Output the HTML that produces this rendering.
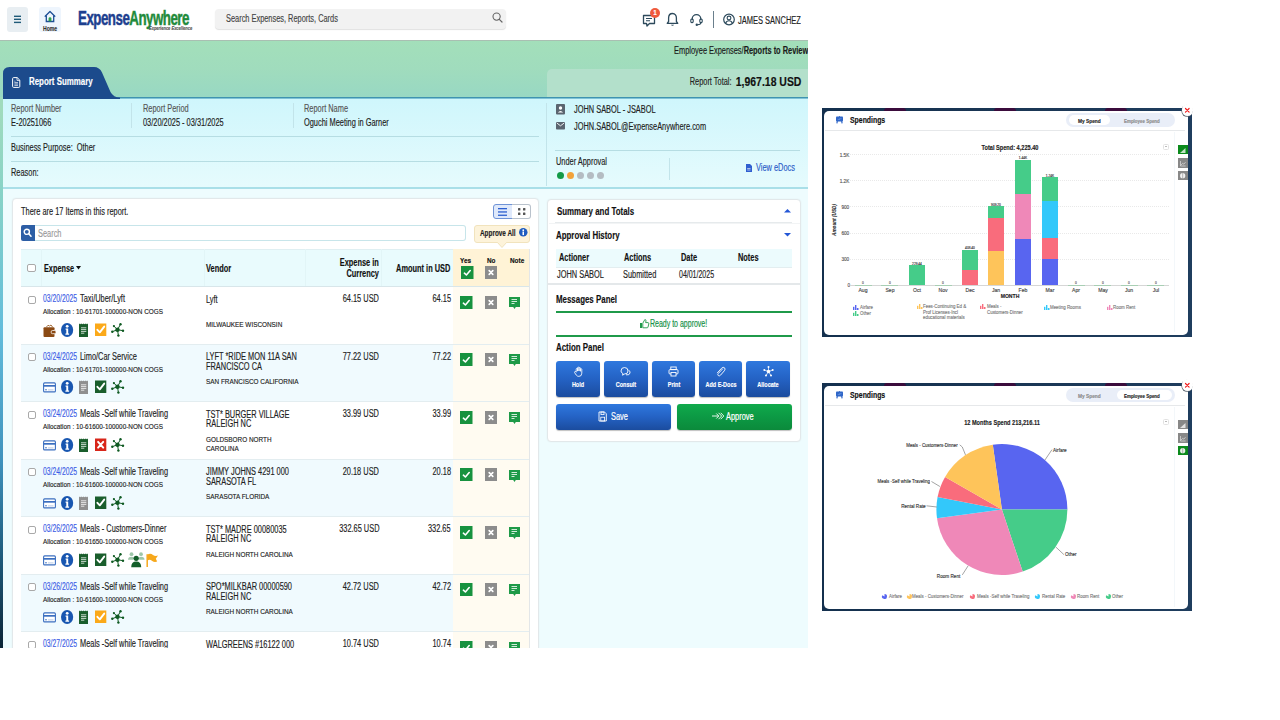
<!DOCTYPE html>
<html><head><meta charset="utf-8"><title>ExpenseAnywhere</title>
<style>
html,body{margin:0;padding:0;}
body{width:1280px;height:720px;overflow:hidden;background:#fff;position:relative;font-family:"Liberation Sans",sans-serif;}
.a{position:absolute;}
.t{position:absolute;white-space:nowrap;-webkit-text-stroke-width:.15px;}
svg{overflow:visible;}
#app{position:absolute;left:0;top:0;width:808px;height:648px;overflow:hidden;
 background:linear-gradient(180deg,#a3dcbc 0px,#a0dbbd 110px,#86d2c8 200px,#62bddb 330px,#3f93bd 460px,#1d5a7a 560px,#0b2536 648px);}
</style></head><body>
<div id="app">
<div class="a" style="left:0px;top:0px;width:808px;height:40px;background:#fff;"></div>
<div class="a" style="left:0px;top:40px;width:808px;height:1px;background:#a9bfb2;"></div>
<div class="a" style="left:0px;top:41px;width:808px;height:56px;background:linear-gradient(180deg,#a3dfba 0%,#a0dcbd 50%,#98d8c3 100%);"></div>
<div class="a" style="left:7px;top:7px;width:21px;height:25px;background:#e8eef2;border-radius:3px;"></div>
<svg class="a" style="left:14px;top:15px;" width="7" height="8" viewBox="0 0 7 8"><rect x="0" y="0.6" width="7" height="1.4" fill="#1f5a78"/><rect x="0" y="3.6" width="7" height="1.4" fill="#1f5a78"/><rect x="0" y="6.7" width="7" height="1.4" fill="#1f5a78"/></svg>
<div class="a" style="left:39px;top:7px;width:22px;height:25px;background:#eef5fd;border-radius:3px;"></div>
<svg class="a" style="left:44px;top:10px;" width="12" height="13" viewBox="0 0 12 13"><path d="M1.2 6.2 L6 1.5 L10.8 6.2" fill="none" stroke="#1d4f96" stroke-width="1.3" stroke-linejoin="round" stroke-linecap="round"/><path d="M2.3 5.6 V11.5 H9.7 V5.6" fill="none" stroke="#1d4f96" stroke-width="1.3"/><path d="M4.6 11.3 V8.6 a1.4 1.4 0 0 1 2.8 0 V11.3 Z" fill="#2ea04e"/></svg>
<div class="t" style="left:42.8px;top:25.75px;font-size:6.5px;line-height:6.5px;color:#333;font-weight:bold;transform:scaleX(0.78);transform-origin:0 0;">Home</div>
<div class="t" style="left:78px;top:6px;font-size:21px;line-height:24px;font-weight:bold;letter-spacing:-0.8px;transform:scaleX(.635);-webkit-text-stroke:.5px;transform-origin:0 0;"><span style="color:#1d3f8f">Expense</span><span style="color:#1f8b3b">Anywhere</span></div>
<div class="t" style="left:148.5px;top:26.25px;font-size:5px;line-height:5px;color:#555;font-weight:bold;transform:scaleX(0.8);transform-origin:0 0;"><i>Experience Excellence</i></div>
<div class="a" style="left:215px;top:9px;width:291px;height:20px;background:#f2f2f2;border-radius:4px;box-shadow:0 1px 1px rgba(0,0,0,.12);"></div>
<div class="t" style="left:226px;top:14.49px;font-size:10px;line-height:10px;color:#444;transform:scaleX(0.74);transform-origin:0 0;">Search Expenses, Reports, Cards</div>
<svg class="a" style="left:492px;top:12px;" width="11" height="11" viewBox="0 0 11 11"><circle cx="4.6" cy="4.6" r="3.6" fill="none" stroke="#666" stroke-width="1.1"/><path d="M7.3 7.3 L10 10" stroke="#666" stroke-width="1.2" stroke-linecap="round"/></svg>
<svg class="a" style="left:642px;top:14px;" width="14" height="13" viewBox="0 0 14 13"><path d="M1.5 1.5 H12.5 V9.5 H7.5 L5 12 L4.5 9.5 H1.5 Z" fill="none" stroke="#2d4a5c" stroke-width="1.3" stroke-linejoin="round"/><path d="M4 4.5 H10 M4 6.8 H8" stroke="#2d4a5c" stroke-width="1.1"/></svg>
<div class="a" style="left:649.5px;top:7.5px;width:10px;height:10px;border-radius:50%;background:#ef5a3c;"></div>
<div class="t" style="left:454.50px;width:400px;text-align:center;top:9.19px;font-size:7px;line-height:7px;color:#fff;font-weight:bold;transform:scaleX(0.9);transform-origin:50% 0;">1</div>
<svg class="a" style="left:666px;top:12px;" width="13" height="15" viewBox="0 0 13 15"><path d="M6.5 1.5 C3.8 1.5 2.6 3.6 2.6 6 V9.5 L1.2 11.3 H11.8 L10.4 9.5 V6 C10.4 3.6 9.2 1.5 6.5 1.5 Z" fill="none" stroke="#2d4a5c" stroke-width="1.3" stroke-linejoin="round"/><path d="M5 12.8 a1.6 1.6 0 0 0 3 0" fill="#2d4a5c"/></svg>
<svg class="a" style="left:690px;top:13px;" width="13" height="13" viewBox="0 0 13 13"><path d="M2.2 7 V6 a4.3 4.3 0 0 1 8.6 0 V7" fill="none" stroke="#2d4a5c" stroke-width="1.3"/><rect x="0.8" y="6" width="2.4" height="3.6" rx="1" fill="none" stroke="#2d4a5c" stroke-width="1.1"/><rect x="9.8" y="6" width="2.4" height="3.6" rx="1" fill="none" stroke="#2d4a5c" stroke-width="1.1"/><path d="M11 9.5 Q11 11.5 7.5 11.8" fill="none" stroke="#2d4a5c" stroke-width="1.1"/><circle cx="6.8" cy="11.8" r="1.2" fill="#2d4a5c"/></svg>
<div class="a" style="left:713px;top:11px;width:1px;height:17px;background:#6a7f8c;"></div>
<svg class="a" style="left:723px;top:13px;" width="12" height="13" viewBox="0 0 12 13"><circle cx="6" cy="6.5" r="5.3" fill="none" stroke="#2d4a5c" stroke-width="1.2"/><circle cx="6" cy="5" r="1.9" fill="none" stroke="#2d4a5c" stroke-width="1.1"/><path d="M2.6 10.3 Q3.5 7.8 6 7.8 Q8.5 7.8 9.4 10.3" fill="none" stroke="#2d4a5c" stroke-width="1.1"/></svg>
<div class="t" style="left:738px;top:15.50px;font-size:10px;line-height:10px;color:#222;transform:scaleX(0.75);transform-origin:0 0;">JAMES SANCHEZ</div>
<div class="t" style="right:0.00px;top:46.09px;font-size:10px;line-height:10px;color:#1a1a1a;transform:scaleX(0.74);transform-origin:100% 0;">Employee Expenses/<b>Reports to Review</b></div>
<div class="a" style="left:3px;top:97px;width:805px;height:1px;background:#3f93b0;"></div>
<div class="a" style="left:3px;top:98px;width:805px;height:1px;background:#7ec3d6;"></div>
<svg class="a" style="left:3px;top:67px;" width="118" height="32" viewBox="0 0 118 32"><path d="M0 32 V6.5 Q0 0 6.5 0 H91 Q96.5 0 99 5.5 L107.5 25 Q110.5 30.5 117 30.5 V32 Z" fill="#1c4b8c"/></svg>
<svg class="a" style="left:12px;top:77px;" width="8.5" height="11" viewBox="0 0 8.5 11"><path d="M1.6 .6 H5.2 L7.8 3.2 V9.4 Q7.8 10.4 6.8 10.4 H1.6 Q.6 10.4 .6 9.4 V1.6 Q.6 .6 1.6 .6 Z" fill="none" stroke="#fff" stroke-width="1"/><path d="M5 .8 V3.4 H7.6" fill="none" stroke="#fff" stroke-width=".8"/><path d="M2.4 5.6 H6 M2.4 7 H6 M2.4 8.4 H6" stroke="#fff" stroke-width=".7"/><path d="M2.4 4.2 H3.4" stroke="#fff" stroke-width=".7"/></svg>
<div class="t" style="left:29.4px;top:77.09px;font-size:10px;line-height:10px;color:#fff;font-weight:bold;transform:scaleX(0.79);transform-origin:0 0;">Report Summary</div>
<div class="a" style="left:547px;top:69px;width:261px;height:28px;background:#b3e0cb;border-top-left-radius:5px;"></div>
<div class="t" style="right:76.50px;top:76.89px;font-size:10px;line-height:10px;color:#222;transform:scaleX(0.74);transform-origin:100% 0;">Report Total:</div>
<div class="t" style="right:7.00px;top:76.03px;font-size:12px;line-height:12px;color:#111;font-weight:bold;transform:scaleX(0.87);transform-origin:100% 0;">1,967.18 USD</div>
<div class="a" style="left:3px;top:99px;width:805px;height:89px;background:linear-gradient(180deg,#cff6fc 0%,#e6fbfd 100%);"></div>
<div class="a" style="left:3px;top:187px;width:805px;height:2px;background:#a9dfe8;"></div>
<div class="t" style="left:11px;top:103.79px;font-size:10px;line-height:10px;color:#555;transform:scaleX(0.74);transform-origin:0 0;">Report Number</div>
<div class="t" style="left:11px;top:117.50px;font-size:10px;line-height:10px;color:#222;transform:scaleX(0.74);transform-origin:0 0;">E-20251066</div>
<div class="a" style="left:131px;top:103px;width:1px;height:25px;background:#c2e4ea;"></div>
<div class="t" style="left:142.7px;top:103.79px;font-size:10px;line-height:10px;color:#555;transform:scaleX(0.74);transform-origin:0 0;">Report Period</div>
<div class="t" style="left:142.7px;top:117.50px;font-size:10px;line-height:10px;color:#222;transform:scaleX(0.74);transform-origin:0 0;">03/20/2025 - 03/31/2025</div>
<div class="a" style="left:293px;top:103px;width:1px;height:25px;background:#c2e4ea;"></div>
<div class="t" style="left:304.4px;top:103.79px;font-size:10px;line-height:10px;color:#555;transform:scaleX(0.74);transform-origin:0 0;">Report Name</div>
<div class="t" style="left:304.4px;top:117.50px;font-size:10px;line-height:10px;color:#222;transform:scaleX(0.74);transform-origin:0 0;">Oguchi Meeting in Garner</div>
<div class="a" style="left:11px;top:136px;width:528px;height:1px;background:#b6dde3;"></div>
<div class="t" style="left:11px;top:143.09px;font-size:10px;line-height:10px;color:#222;transform:scaleX(0.74);transform-origin:0 0;">Business Purpose:&nbsp; Other</div>
<div class="a" style="left:11px;top:161px;width:528px;height:1px;background:#b6dde3;"></div>
<div class="t" style="left:11px;top:168.09px;font-size:10px;line-height:10px;color:#222;transform:scaleX(0.74);transform-origin:0 0;">Reason:</div>
<div class="a" style="left:546px;top:103px;width:1px;height:83px;background:#c2e4ea;"></div>
<svg class="a" style="left:556px;top:104px;" width="9" height="11" viewBox="0 0 9 11"><rect x="0" y="0" width="9" height="10.5" rx="1" fill="#5a6570"/><circle cx="4.5" cy="4" r="1.7" fill="#fff"/><path d="M1.8 8.6 Q4.5 5.6 7.2 8.6 Z" fill="#fff"/></svg>
<div class="t" style="left:574.4px;top:105.09px;font-size:10px;line-height:10px;color:#222;transform:scaleX(0.74);transform-origin:0 0;">JOHN SABOL - JSABOL</div>
<svg class="a" style="left:556px;top:122px;" width="9" height="8" viewBox="0 0 9 8"><rect x="0" y="0" width="9" height="7.5" rx=".8" fill="#5a6570"/><path d="M.8 1 L4.5 3.8 L8.2 1" fill="none" stroke="#fff" stroke-width=".9"/></svg>
<div class="t" style="left:574.4px;top:121.69px;font-size:10px;line-height:10px;color:#222;transform:scaleX(0.74);transform-origin:0 0;">JOHN.SABOL@ExpenseAnywhere.com</div>
<div class="a" style="left:555px;top:150px;width:245px;height:1px;background:#b6dde3;"></div>
<div class="t" style="left:555.5px;top:157.09px;font-size:10px;line-height:10px;color:#222;transform:scaleX(0.74);transform-origin:0 0;">Under Approval</div>
<div class="a" style="left:556.60px;top:172.1px;width:7.4px;height:7.4px;border-radius:50%;background:#139a47;"></div>
<div class="a" style="left:566.67px;top:172.1px;width:7.4px;height:7.4px;border-radius:50%;background:#f2a33a;"></div>
<div class="a" style="left:576.74px;top:172.1px;width:7.4px;height:7.4px;border-radius:50%;background:#b4bcc2;"></div>
<div class="a" style="left:586.81px;top:172.1px;width:7.4px;height:7.4px;border-radius:50%;background:#b4bcc2;"></div>
<div class="a" style="left:596.88px;top:172.1px;width:7.4px;height:7.4px;border-radius:50%;background:#b4bcc2;"></div>
<div class="a" style="left:669px;top:158px;width:1px;height:22px;background:#c2e4ea;"></div>
<svg class="a" style="left:746px;top:164px;" width="6" height="8" viewBox="0 0 6 8"><path d="M0 0 H4 L6 2 V8 H0 Z" fill="#2f5fd0"/><path d="M1.2 4.5 H4.5 M1.2 6 H4.5" stroke="#fff" stroke-width=".6"/></svg>
<div class="t" style="left:756.2px;top:163.49px;font-size:10px;line-height:10px;color:#2a5bc8;transform:scaleX(0.74);transform-origin:0 0;">View eDocs</div>
<div class="a" style="left:3px;top:189px;width:805px;height:459px;background:#eefcfe;"></div>
<div class="a" style="left:11.5px;top:198px;width:527.5px;height:470px;background:#fff;border:1px solid #e2e8ea;border-radius:4px;box-sizing:border-box;box-shadow:0 0 2px rgba(0,0,0,.06);"></div>
<div class="t" style="left:20.8px;top:206.89px;font-size:10px;line-height:10px;color:#222;transform:scaleX(0.74);transform-origin:0 0;">There are 17 Items in this report.</div>
<div class="a" style="left:493px;top:204px;width:19.5px;height:15px;background:#dfe9fb;border:1px solid #6f93d6;border-radius:3px 0 0 3px;box-sizing:border-box;"></div>
<svg class="a" style="left:498px;top:207.5px;" width="9" height="8" viewBox="0 0 9 8"><rect x="0" y="0" width="9" height="1.3" fill="#2b5fd0"/><rect x="0" y="3.3" width="9" height="1.3" fill="#2b5fd0"/><rect x="0" y="6.6" width="9" height="1.3" fill="#2b5fd0"/></svg>
<div class="a" style="left:512px;top:204px;width:18.5px;height:15px;background:#fff;border:1px solid #b9c2cc;border-left:none;border-radius:0 3px 3px 0;box-sizing:border-box;"></div>
<svg class="a" style="left:517.5px;top:208px;" width="8" height="7" viewBox="0 0 8 7"><rect x="0" y="0" width="2.4" height="2.4" rx=".5" fill="#555"/><rect x="5" y="0" width="2.4" height="2.4" rx=".5" fill="#555"/><rect x="0" y="4.6" width="2.4" height="2.4" rx=".5" fill="#555"/><rect x="5" y="4.6" width="2.4" height="2.4" rx=".5" fill="#555"/></svg>
<div class="a" style="left:20.5px;top:225px;width:14px;height:16px;background:#2d5ea5;border-radius:2px 0 0 2px;"></div>
<svg class="a" style="left:23px;top:228px;" width="9" height="10" viewBox="0 0 9 10"><circle cx="3.8" cy="3.8" r="2.6" fill="none" stroke="#fff" stroke-width="1.4"/><path d="M5.8 5.8 L8 8.2" stroke="#fff" stroke-width="1.6" stroke-linecap="round"/></svg>
<div class="a" style="left:34.5px;top:225px;width:431.5px;height:16px;background:#fff;border:1px solid #c7e5ea;border-left:none;border-radius:0 3px 3px 0;box-sizing:border-box;"></div>
<div class="t" style="left:37.8px;top:228.59px;font-size:10px;line-height:10px;color:#999;transform:scaleX(0.74);transform-origin:0 0;">Search</div>
<div class="a" style="left:474px;top:224.5px;width:55.5px;height:18.5px;background:#fdf3da;border:1px solid #f1e3bd;border-radius:3px;box-sizing:border-box;"></div>
<svg class="a" style="left:497px;top:242px;" width="10" height="6" viewBox="0 0 10 6"><path d="M0 0 L5 5.5 L10 0 Z" fill="#fdf3da"/><path d="M0 0 L5 5.5 L10 0" fill="none" stroke="#f1e3bd" stroke-width="1"/><rect x="0.6" y="-1" width="8.8" height="1.4" fill="#fdf3da"/></svg>
<div class="t" style="left:480px;top:229.43px;font-size:9px;line-height:9px;color:#1a1a1a;font-weight:bold;transform:scaleX(0.71);transform-origin:0 0;">Approve All</div>
<svg class="a" style="left:518.5px;top:228px;" width="8.5" height="8.5" viewBox="0 0 8.5 8.5"><circle cx="4.25" cy="4.25" r="4.25" fill="#1f5cc0"/><circle cx="4.25" cy="2.2" r=".9" fill="#fff"/><rect x="3.5" y="3.5" width="1.5" height="3.6" fill="#fff"/></svg>
<div class="a" style="left:20.5px;top:248.5px;width:509.0px;height:38px;background:#e9fbfd;border-top:1px solid #dfeff2;box-sizing:border-box;"></div>
<div class="a" style="left:453px;top:248.5px;width:76.5px;height:38px;background:#fff3d6;"></div>
<div class="a" style="left:20.5px;top:286px;width:509.0px;height:1.5px;background:#d8e6ea;"></div>
<div class="a" style="left:40.5px;top:249px;width:1px;height:37px;background:#e2f5f7;"></div>
<div class="a" style="left:203.5px;top:249px;width:1px;height:37px;background:#e2f5f7;"></div>
<div class="a" style="left:305px;top:249px;width:1px;height:37px;background:#e2f5f7;"></div>
<div class="a" style="left:381.2px;top:249px;width:1px;height:37px;background:#e2f5f7;"></div>
<div class="a" style="left:27.3px;top:263.7px;width:8.5px;height:8.5px;background:#fff;border:1px solid #a9a9a9;border-radius:2px;box-sizing:border-box;"></div>
<div class="t" style="left:43.8px;top:263.69px;font-size:10px;line-height:10px;color:#111;font-weight:bold;transform:scaleX(0.73);transform-origin:0 0;">Expense</div>
<svg class="a" style="left:76.3px;top:266.4px;" width="5" height="4" viewBox="0 0 5 4"><path d="M0 0 H5 L2.5 3.6 Z" fill="#111"/></svg>
<div class="t" style="left:206.3px;top:263.69px;font-size:10px;line-height:10px;color:#111;font-weight:bold;transform:scaleX(0.74);transform-origin:0 0;">Vendor</div>
<div class="t" style="right:429.00px;top:258.30px;font-size:10px;line-height:10px;color:#111;font-weight:bold;transform:scaleX(0.74);transform-origin:100% 0;">Expense in</div>
<div class="t" style="right:429.00px;top:269.30px;font-size:10px;line-height:10px;color:#111;font-weight:bold;transform:scaleX(0.74);transform-origin:100% 0;">Currency</div>
<div class="t" style="right:358.00px;top:263.69px;font-size:10px;line-height:10px;color:#111;font-weight:bold;transform:scaleX(0.74);transform-origin:100% 0;">Amount in USD</div>
<div class="t" style="left:460.4px;top:257.36px;font-size:8px;line-height:8px;color:#111;font-weight:bold;transform:scaleX(0.8);transform-origin:0 0;">Yes</div>
<div class="t" style="left:486.8px;top:257.36px;font-size:8px;line-height:8px;color:#111;font-weight:bold;transform:scaleX(0.8);transform-origin:0 0;">No</div>
<div class="t" style="left:509.9px;top:257.36px;font-size:8px;line-height:8px;color:#111;font-weight:bold;transform:scaleX(0.8);transform-origin:0 0;">Note</div>
<svg class="a" style="left:461px;top:266.3px;" width="12.5" height="13" viewBox="0 0 12.5 13"><rect width="12.5" height="13" fill="#17923f"/><path d="M3.4 7.2 L5.4 9 L9.2 4.6" fill="none" stroke="#fff" stroke-width="1.6" stroke-linecap="round" stroke-linejoin="round"/></svg>
<svg class="a" style="left:485.3px;top:266.4px;" width="12" height="13" viewBox="0 0 12 13"><rect width="12" height="13" fill="#8c8c8c"/><path d="M4.2 4.7 L7.8 8.3 M7.8 4.7 L4.2 8.3" stroke="#fff" stroke-width="1.7" stroke-linecap="round"/></svg>
<div class="a" style="left:20.5px;top:287.0px;width:432.5px;height:57.5px;background:#fff;"></div>
<div class="a" style="left:453px;top:287.0px;width:76.5px;height:57.5px;background:#fffbf1;"></div>
<div class="a" style="left:20.5px;top:343.5px;width:509.0px;height:1px;background:#e3edf0;"></div>
<div class="a" style="left:28.2px;top:295.8px;width:8px;height:8px;background:#fff;border:1px solid #a9a9a9;border-radius:2px;box-sizing:border-box;"></div>
<div class="t" style="left:43.1px;top:294.30px;font-size:10px;line-height:10px;color:#3d5de6;transform:scaleX(0.68);transform-origin:0 0;">03/20/2025</div>
<div class="t" style="left:79.9px;top:294.30px;font-size:10px;line-height:10px;color:#222;transform:scaleX(0.74);transform-origin:0 0;">Taxi/Uber/Lyft</div>
<div class="t" style="left:43.1px;top:308.06px;font-size:8px;line-height:8px;color:#222;transform:scaleX(0.796);transform-origin:0 0;-webkit-text-stroke:.15px #222;">Allocation : 10-61701-100000-NON COGS</div>
<div class="t" style="left:205.7px;top:294.60px;font-size:10px;line-height:10px;color:#222;transform:scaleX(0.74);transform-origin:0 0;">Lyft</div>
<div class="t" style="left:205.7px;top:320.66px;font-size:8px;line-height:8px;color:#222;transform:scaleX(0.798);transform-origin:0 0;-webkit-text-stroke:.15px #222;">MILWAUKEE WISCONSIN</div>
<div class="t" style="right:428.60px;top:294.30px;font-size:10px;line-height:10px;color:#222;transform:scaleX(0.74);transform-origin:100% 0;">64.15 USD</div>
<div class="t" style="right:357.00px;top:294.30px;font-size:10px;line-height:10px;color:#222;transform:scaleX(0.74);transform-origin:100% 0;">64.15</div>
<svg class="a" style="left:460px;top:296px;" width="12.5" height="13" viewBox="0 0 12.5 13"><rect width="12.5" height="13" fill="#17923f"/><path d="M3.4 7.2 L5.4 9 L9.2 4.6" fill="none" stroke="#fff" stroke-width="1.6" stroke-linecap="round" stroke-linejoin="round"/></svg>
<svg class="a" style="left:485px;top:296px;" width="12" height="13" viewBox="0 0 12 13"><rect width="12" height="13" fill="#8c8c8c"/><path d="M4.2 4.7 L7.8 8.3 M7.8 4.7 L4.2 8.3" stroke="#fff" stroke-width="1.7" stroke-linecap="round"/></svg>
<svg class="a" style="left:509px;top:297px;" width="11" height="13" viewBox="0 0 11 13"><path d="M0 0 H11 V10 H6.8 L5.5 12 L4.2 10 H0 Z" fill="#1e9a48"/><path d="M2.5 2.5 H8 M2.5 4.5 H8 M2.5 6.5 H5.5" stroke="#fff" stroke-width=".9" opacity=".9"/></svg>
<svg class="a" style="left:43.3px;top:323px;" width="13" height="14" viewBox="0 0 13 14"><path d="M3.5 4 Q5 1 6.5 3 Q8 .5 9.5 4" fill="none" stroke="#9a5a20" stroke-width=".9"/><rect x=".5" y="4.3" width="11" height="9.7" rx="1" fill="#8b4a14"/><rect x="8.2" y="7.5" width="4.8" height="3.2" rx="1.3" fill="#8b4a14" stroke="#fff" stroke-width=".8"/></svg>
<svg class="a" style="left:60.7px;top:323px;" width="12.5" height="14" viewBox="0 0 12.5 14"><ellipse cx="6.1" cy="7" rx="6.1" ry="7" fill="#1856b0"/><circle cx="6.2" cy="3.3" r="1.4" fill="#fff"/><path d="M4.6 5.5 H7.2 V10.6 H8.1 V11.8 H4.4 V10.6 H5.3 V6.7 H4.6 Z" fill="#fff"/></svg>
<svg class="a" style="left:79px;top:323px;" width="9.5" height="14" viewBox="0 0 9.5 14"><path d="M0 1.2 L.9 .4 L1.8 1.2 L2.7 .4 L3.6 1.2 L4.5 .4 L5.4 1.2 L6.3 .4 L7.2 1.2 L8.1 .4 L9 1.2 V14 H0 Z" fill="#1a5e2c"/><path d="M2 4.8 H7.3 M2 6.6 H7.3 M2 8.4 H7.3 M2 10.2 H5.3" stroke="#fff" stroke-width=".9" opacity=".85"/></svg>
<svg class="a" style="left:94.8px;top:323px;" width="11.5" height="13" viewBox="0 0 11.5 13"><rect x="0" y=".5" width="11.3" height="12.5" fill="#fba919"/><path d="M2.4 6.8 L4.8 9.3 L9.2 3.6" fill="none" stroke="#fff" stroke-width="1.9" stroke-linecap="round" stroke-linejoin="round"/></svg>
<svg class="a" style="left:111px;top:323px;" width="13" height="14" viewBox="0 0 13 14"><g stroke="#0f5a22" stroke-width="1"><path d="M6.5 6.7 L9.5 1.3 M6.5 6.7 L1.3 8.7 M6.5 6.7 L12 7.7 M6.5 6.7 L7.4 12.6 M6.5 6.7 L2.9 3.1"/></g><circle cx="6.5" cy="6.7" r="2.2" fill="#0f5a22"/><circle cx="9.5" cy="1.3" r="1.2" fill="#0f5a22"/><circle cx="1.3" cy="8.7" r="1.2" fill="#0f5a22"/><circle cx="12" cy="7.7" r="1.2" fill="#0f5a22"/><circle cx="7.4" cy="12.6" r="1.2" fill="#0f5a22"/><circle cx="2.9" cy="3.1" r="1.1" fill="#0f5a22"/></svg>
<div class="a" style="left:20.5px;top:344.5px;width:432.5px;height:57.5px;background:#f0fafe;"></div>
<div class="a" style="left:453px;top:344.5px;width:76.5px;height:57.5px;background:#fffbf1;"></div>
<div class="a" style="left:20.5px;top:401.0px;width:509.0px;height:1px;background:#e3edf0;"></div>
<div class="a" style="left:28.2px;top:353.3px;width:8px;height:8px;background:#fff;border:1px solid #a9a9a9;border-radius:2px;box-sizing:border-box;"></div>
<div class="t" style="left:43.1px;top:351.80px;font-size:10px;line-height:10px;color:#3d5de6;transform:scaleX(0.68);transform-origin:0 0;">03/24/2025</div>
<div class="t" style="left:79.9px;top:351.80px;font-size:10px;line-height:10px;color:#222;transform:scaleX(0.74);transform-origin:0 0;">Limo/Car Service</div>
<div class="t" style="left:43.1px;top:365.56px;font-size:8px;line-height:8px;color:#222;transform:scaleX(0.796);transform-origin:0 0;-webkit-text-stroke:.15px #222;">Allocation : 10-61701-100000-NON COGS</div>
<div class="t" style="left:205.7px;top:352.10px;font-size:10px;line-height:10px;color:#222;transform:scaleX(0.74);transform-origin:0 0;">LYFT *RIDE MON 11A SAN</div>
<div class="t" style="left:205.7px;top:361.80px;font-size:10px;line-height:10px;color:#222;transform:scaleX(0.74);transform-origin:0 0;">FRANCISCO CA</div>
<div class="t" style="left:205.7px;top:378.16px;font-size:8px;line-height:8px;color:#222;transform:scaleX(0.798);transform-origin:0 0;-webkit-text-stroke:.15px #222;">SAN FRANCISCO CALIFORNIA</div>
<div class="t" style="right:428.60px;top:351.80px;font-size:10px;line-height:10px;color:#222;transform:scaleX(0.74);transform-origin:100% 0;">77.22 USD</div>
<div class="t" style="right:357.00px;top:351.80px;font-size:10px;line-height:10px;color:#222;transform:scaleX(0.74);transform-origin:100% 0;">77.22</div>
<svg class="a" style="left:460px;top:353px;" width="12.5" height="13" viewBox="0 0 12.5 13"><rect width="12.5" height="13" fill="#17923f"/><path d="M3.4 7.2 L5.4 9 L9.2 4.6" fill="none" stroke="#fff" stroke-width="1.6" stroke-linecap="round" stroke-linejoin="round"/></svg>
<svg class="a" style="left:485px;top:353px;" width="12" height="13" viewBox="0 0 12 13"><rect width="12" height="13" fill="#8c8c8c"/><path d="M4.2 4.7 L7.8 8.3 M7.8 4.7 L4.2 8.3" stroke="#fff" stroke-width="1.7" stroke-linecap="round"/></svg>
<svg class="a" style="left:509px;top:354px;" width="11" height="13" viewBox="0 0 11 13"><path d="M0 0 H11 V10 H6.8 L5.5 12 L4.2 10 H0 Z" fill="#1e9a48"/><path d="M2.5 2.5 H8 M2.5 4.5 H8 M2.5 6.5 H5.5" stroke="#fff" stroke-width=".9" opacity=".9"/></svg>
<svg class="a" style="left:43.3px;top:380px;" width="13" height="14" viewBox="0 0 13 14"><rect x=".6" y="2.9" width="11.8" height="9" rx="1" fill="#fff" stroke="#3b6fc0" stroke-width="1.1"/><rect x=".6" y="5" width="11.8" height="1.7" fill="#3b6fc0"/><circle cx="3" cy="9.7" r=".8" fill="#3b6fc0"/><path d="M5 9.9 H10.5" stroke="#9ab3dc" stroke-width=".7"/></svg>
<svg class="a" style="left:60.7px;top:380px;" width="12.5" height="14" viewBox="0 0 12.5 14"><ellipse cx="6.1" cy="7" rx="6.1" ry="7" fill="#1856b0"/><circle cx="6.2" cy="3.3" r="1.4" fill="#fff"/><path d="M4.6 5.5 H7.2 V10.6 H8.1 V11.8 H4.4 V10.6 H5.3 V6.7 H4.6 Z" fill="#fff"/></svg>
<svg class="a" style="left:79px;top:380px;" width="9.5" height="14" viewBox="0 0 9.5 14"><path d="M0 1.2 L.9 .4 L1.8 1.2 L2.7 .4 L3.6 1.2 L4.5 .4 L5.4 1.2 L6.3 .4 L7.2 1.2 L8.1 .4 L9 1.2 V14 H0 Z" fill="#8f8f8f"/><path d="M2 4.8 H7.3 M2 6.6 H7.3 M2 8.4 H7.3 M2 10.2 H5.3" stroke="#fff" stroke-width=".9" opacity=".85"/></svg>
<svg class="a" style="left:94.8px;top:380px;" width="11.5" height="13" viewBox="0 0 11.5 13"><rect x="0" y=".5" width="11.3" height="12.5" fill="#1a5e2c"/><path d="M2.4 6.8 L4.8 9.3 L9.2 3.6" fill="none" stroke="#fff" stroke-width="1.9" stroke-linecap="round" stroke-linejoin="round"/></svg>
<svg class="a" style="left:111px;top:380px;" width="13" height="14" viewBox="0 0 13 14"><g stroke="#0f5a22" stroke-width="1"><path d="M6.5 6.7 L9.5 1.3 M6.5 6.7 L1.3 8.7 M6.5 6.7 L12 7.7 M6.5 6.7 L7.4 12.6 M6.5 6.7 L2.9 3.1"/></g><circle cx="6.5" cy="6.7" r="2.2" fill="#0f5a22"/><circle cx="9.5" cy="1.3" r="1.2" fill="#0f5a22"/><circle cx="1.3" cy="8.7" r="1.2" fill="#0f5a22"/><circle cx="12" cy="7.7" r="1.2" fill="#0f5a22"/><circle cx="7.4" cy="12.6" r="1.2" fill="#0f5a22"/><circle cx="2.9" cy="3.1" r="1.1" fill="#0f5a22"/></svg>
<div class="a" style="left:20.5px;top:402.0px;width:432.5px;height:57.5px;background:#fff;"></div>
<div class="a" style="left:453px;top:402.0px;width:76.5px;height:57.5px;background:#fffbf1;"></div>
<div class="a" style="left:20.5px;top:458.5px;width:509.0px;height:1px;background:#e3edf0;"></div>
<div class="a" style="left:28.2px;top:410.8px;width:8px;height:8px;background:#fff;border:1px solid #a9a9a9;border-radius:2px;box-sizing:border-box;"></div>
<div class="t" style="left:43.1px;top:409.30px;font-size:10px;line-height:10px;color:#3d5de6;transform:scaleX(0.68);transform-origin:0 0;">03/24/2025</div>
<div class="t" style="left:79.9px;top:409.30px;font-size:10px;line-height:10px;color:#222;transform:scaleX(0.74);transform-origin:0 0;">Meals -Self while Traveling</div>
<div class="t" style="left:43.1px;top:423.06px;font-size:8px;line-height:8px;color:#222;transform:scaleX(0.796);transform-origin:0 0;-webkit-text-stroke:.15px #222;">Allocation : 10-61600-100000-NON COGS</div>
<div class="t" style="left:205.7px;top:409.60px;font-size:10px;line-height:10px;color:#222;transform:scaleX(0.74);transform-origin:0 0;">TST* BURGER VILLAGE</div>
<div class="t" style="left:205.7px;top:419.30px;font-size:10px;line-height:10px;color:#222;transform:scaleX(0.74);transform-origin:0 0;">RALEIGH NC</div>
<div class="t" style="left:205.7px;top:435.66px;font-size:8px;line-height:8px;color:#222;transform:scaleX(0.798);transform-origin:0 0;-webkit-text-stroke:.15px #222;">GOLDSBORO NORTH</div>
<div class="t" style="left:205.7px;top:445.06px;font-size:8px;line-height:8px;color:#222;transform:scaleX(0.798);transform-origin:0 0;-webkit-text-stroke:.15px #222;">CAROLINA</div>
<div class="t" style="right:428.60px;top:409.30px;font-size:10px;line-height:10px;color:#222;transform:scaleX(0.74);transform-origin:100% 0;">33.99 USD</div>
<div class="t" style="right:357.00px;top:409.30px;font-size:10px;line-height:10px;color:#222;transform:scaleX(0.74);transform-origin:100% 0;">33.99</div>
<svg class="a" style="left:460px;top:411px;" width="12.5" height="13" viewBox="0 0 12.5 13"><rect width="12.5" height="13" fill="#17923f"/><path d="M3.4 7.2 L5.4 9 L9.2 4.6" fill="none" stroke="#fff" stroke-width="1.6" stroke-linecap="round" stroke-linejoin="round"/></svg>
<svg class="a" style="left:485px;top:411px;" width="12" height="13" viewBox="0 0 12 13"><rect width="12" height="13" fill="#8c8c8c"/><path d="M4.2 4.7 L7.8 8.3 M7.8 4.7 L4.2 8.3" stroke="#fff" stroke-width="1.7" stroke-linecap="round"/></svg>
<svg class="a" style="left:509px;top:412px;" width="11" height="13" viewBox="0 0 11 13"><path d="M0 0 H11 V10 H6.8 L5.5 12 L4.2 10 H0 Z" fill="#1e9a48"/><path d="M2.5 2.5 H8 M2.5 4.5 H8 M2.5 6.5 H5.5" stroke="#fff" stroke-width=".9" opacity=".9"/></svg>
<svg class="a" style="left:43.3px;top:438px;" width="13" height="14" viewBox="0 0 13 14"><rect x=".6" y="2.9" width="11.8" height="9" rx="1" fill="#fff" stroke="#3b6fc0" stroke-width="1.1"/><rect x=".6" y="5" width="11.8" height="1.7" fill="#3b6fc0"/><circle cx="3" cy="9.7" r=".8" fill="#3b6fc0"/><path d="M5 9.9 H10.5" stroke="#9ab3dc" stroke-width=".7"/></svg>
<svg class="a" style="left:60.7px;top:438px;" width="12.5" height="14" viewBox="0 0 12.5 14"><ellipse cx="6.1" cy="7" rx="6.1" ry="7" fill="#1856b0"/><circle cx="6.2" cy="3.3" r="1.4" fill="#fff"/><path d="M4.6 5.5 H7.2 V10.6 H8.1 V11.8 H4.4 V10.6 H5.3 V6.7 H4.6 Z" fill="#fff"/></svg>
<svg class="a" style="left:79px;top:438px;" width="9.5" height="14" viewBox="0 0 9.5 14"><path d="M0 1.2 L.9 .4 L1.8 1.2 L2.7 .4 L3.6 1.2 L4.5 .4 L5.4 1.2 L6.3 .4 L7.2 1.2 L8.1 .4 L9 1.2 V14 H0 Z" fill="#1a5e2c"/><path d="M2 4.8 H7.3 M2 6.6 H7.3 M2 8.4 H7.3 M2 10.2 H5.3" stroke="#fff" stroke-width=".9" opacity=".85"/></svg>
<svg class="a" style="left:94.8px;top:438px;" width="11.5" height="13" viewBox="0 0 11.5 13"><rect x="0" y=".5" width="11.3" height="12.5" fill="#d8261a"/><path d="M3.1 3.9 L8.2 9.6 M8.2 3.9 L3.1 9.6" stroke="#fff" stroke-width="2" stroke-linecap="round"/></svg>
<svg class="a" style="left:111px;top:438px;" width="13" height="14" viewBox="0 0 13 14"><g stroke="#0f5a22" stroke-width="1"><path d="M6.5 6.7 L9.5 1.3 M6.5 6.7 L1.3 8.7 M6.5 6.7 L12 7.7 M6.5 6.7 L7.4 12.6 M6.5 6.7 L2.9 3.1"/></g><circle cx="6.5" cy="6.7" r="2.2" fill="#0f5a22"/><circle cx="9.5" cy="1.3" r="1.2" fill="#0f5a22"/><circle cx="1.3" cy="8.7" r="1.2" fill="#0f5a22"/><circle cx="12" cy="7.7" r="1.2" fill="#0f5a22"/><circle cx="7.4" cy="12.6" r="1.2" fill="#0f5a22"/><circle cx="2.9" cy="3.1" r="1.1" fill="#0f5a22"/></svg>
<div class="a" style="left:20.5px;top:459.5px;width:432.5px;height:57.5px;background:#f0fafe;"></div>
<div class="a" style="left:453px;top:459.5px;width:76.5px;height:57.5px;background:#fffbf1;"></div>
<div class="a" style="left:20.5px;top:516.0px;width:509.0px;height:1px;background:#e3edf0;"></div>
<div class="a" style="left:28.2px;top:468.3px;width:8px;height:8px;background:#fff;border:1px solid #a9a9a9;border-radius:2px;box-sizing:border-box;"></div>
<div class="t" style="left:43.1px;top:466.80px;font-size:10px;line-height:10px;color:#3d5de6;transform:scaleX(0.68);transform-origin:0 0;">03/24/2025</div>
<div class="t" style="left:79.9px;top:466.80px;font-size:10px;line-height:10px;color:#222;transform:scaleX(0.74);transform-origin:0 0;">Meals -Self while Traveling</div>
<div class="t" style="left:43.1px;top:480.56px;font-size:8px;line-height:8px;color:#222;transform:scaleX(0.796);transform-origin:0 0;-webkit-text-stroke:.15px #222;">Allocation : 10-61600-100000-NON COGS</div>
<div class="t" style="left:205.7px;top:467.10px;font-size:10px;line-height:10px;color:#222;transform:scaleX(0.74);transform-origin:0 0;">JIMMY JOHNS 4291 000</div>
<div class="t" style="left:205.7px;top:476.80px;font-size:10px;line-height:10px;color:#222;transform:scaleX(0.74);transform-origin:0 0;">SARASOTA FL</div>
<div class="t" style="left:205.7px;top:493.16px;font-size:8px;line-height:8px;color:#222;transform:scaleX(0.798);transform-origin:0 0;-webkit-text-stroke:.15px #222;">SARASOTA FLORIDA</div>
<div class="t" style="right:428.60px;top:466.80px;font-size:10px;line-height:10px;color:#222;transform:scaleX(0.74);transform-origin:100% 0;">20.18 USD</div>
<div class="t" style="right:357.00px;top:466.80px;font-size:10px;line-height:10px;color:#222;transform:scaleX(0.74);transform-origin:100% 0;">20.18</div>
<svg class="a" style="left:460px;top:468px;" width="12.5" height="13" viewBox="0 0 12.5 13"><rect width="12.5" height="13" fill="#17923f"/><path d="M3.4 7.2 L5.4 9 L9.2 4.6" fill="none" stroke="#fff" stroke-width="1.6" stroke-linecap="round" stroke-linejoin="round"/></svg>
<svg class="a" style="left:485px;top:468px;" width="12" height="13" viewBox="0 0 12 13"><rect width="12" height="13" fill="#8c8c8c"/><path d="M4.2 4.7 L7.8 8.3 M7.8 4.7 L4.2 8.3" stroke="#fff" stroke-width="1.7" stroke-linecap="round"/></svg>
<svg class="a" style="left:509px;top:470px;" width="11" height="13" viewBox="0 0 11 13"><path d="M0 0 H11 V10 H6.8 L5.5 12 L4.2 10 H0 Z" fill="#1e9a48"/><path d="M2.5 2.5 H8 M2.5 4.5 H8 M2.5 6.5 H5.5" stroke="#fff" stroke-width=".9" opacity=".9"/></svg>
<svg class="a" style="left:43.3px;top:496px;" width="13" height="14" viewBox="0 0 13 14"><rect x=".6" y="2.9" width="11.8" height="9" rx="1" fill="#fff" stroke="#3b6fc0" stroke-width="1.1"/><rect x=".6" y="5" width="11.8" height="1.7" fill="#3b6fc0"/><circle cx="3" cy="9.7" r=".8" fill="#3b6fc0"/><path d="M5 9.9 H10.5" stroke="#9ab3dc" stroke-width=".7"/></svg>
<svg class="a" style="left:60.7px;top:496px;" width="12.5" height="14" viewBox="0 0 12.5 14"><ellipse cx="6.1" cy="7" rx="6.1" ry="7" fill="#1856b0"/><circle cx="6.2" cy="3.3" r="1.4" fill="#fff"/><path d="M4.6 5.5 H7.2 V10.6 H8.1 V11.8 H4.4 V10.6 H5.3 V6.7 H4.6 Z" fill="#fff"/></svg>
<svg class="a" style="left:79px;top:496px;" width="9.5" height="14" viewBox="0 0 9.5 14"><path d="M0 1.2 L.9 .4 L1.8 1.2 L2.7 .4 L3.6 1.2 L4.5 .4 L5.4 1.2 L6.3 .4 L7.2 1.2 L8.1 .4 L9 1.2 V14 H0 Z" fill="#8f8f8f"/><path d="M2 4.8 H7.3 M2 6.6 H7.3 M2 8.4 H7.3 M2 10.2 H5.3" stroke="#fff" stroke-width=".9" opacity=".85"/></svg>
<svg class="a" style="left:94.8px;top:496px;" width="11.5" height="13" viewBox="0 0 11.5 13"><rect x="0" y=".5" width="11.3" height="12.5" fill="#1a5e2c"/><path d="M2.4 6.8 L4.8 9.3 L9.2 3.6" fill="none" stroke="#fff" stroke-width="1.9" stroke-linecap="round" stroke-linejoin="round"/></svg>
<svg class="a" style="left:111px;top:496px;" width="13" height="14" viewBox="0 0 13 14"><g stroke="#0f5a22" stroke-width="1"><path d="M6.5 6.7 L9.5 1.3 M6.5 6.7 L1.3 8.7 M6.5 6.7 L12 7.7 M6.5 6.7 L7.4 12.6 M6.5 6.7 L2.9 3.1"/></g><circle cx="6.5" cy="6.7" r="2.2" fill="#0f5a22"/><circle cx="9.5" cy="1.3" r="1.2" fill="#0f5a22"/><circle cx="1.3" cy="8.7" r="1.2" fill="#0f5a22"/><circle cx="12" cy="7.7" r="1.2" fill="#0f5a22"/><circle cx="7.4" cy="12.6" r="1.2" fill="#0f5a22"/><circle cx="2.9" cy="3.1" r="1.1" fill="#0f5a22"/></svg>
<div class="a" style="left:20.5px;top:517.0px;width:432.5px;height:57.5px;background:#fff;"></div>
<div class="a" style="left:453px;top:517.0px;width:76.5px;height:57.5px;background:#fffbf1;"></div>
<div class="a" style="left:20.5px;top:573.5px;width:509.0px;height:1px;background:#e3edf0;"></div>
<div class="a" style="left:28.2px;top:525.8px;width:8px;height:8px;background:#fff;border:1px solid #a9a9a9;border-radius:2px;box-sizing:border-box;"></div>
<div class="t" style="left:43.1px;top:524.30px;font-size:10px;line-height:10px;color:#3d5de6;transform:scaleX(0.68);transform-origin:0 0;">03/26/2025</div>
<div class="t" style="left:79.9px;top:524.30px;font-size:10px;line-height:10px;color:#222;transform:scaleX(0.74);transform-origin:0 0;">Meals - Customers-Dinner</div>
<div class="t" style="left:43.1px;top:538.06px;font-size:8px;line-height:8px;color:#222;transform:scaleX(0.796);transform-origin:0 0;-webkit-text-stroke:.15px #222;">Allocation : 10-61650-100000-NON COGS</div>
<div class="t" style="left:205.7px;top:524.60px;font-size:10px;line-height:10px;color:#222;transform:scaleX(0.74);transform-origin:0 0;">TST* MADRE 00080035</div>
<div class="t" style="left:205.7px;top:534.30px;font-size:10px;line-height:10px;color:#222;transform:scaleX(0.74);transform-origin:0 0;">RALEIGH NC</div>
<div class="t" style="left:205.7px;top:550.66px;font-size:8px;line-height:8px;color:#222;transform:scaleX(0.798);transform-origin:0 0;-webkit-text-stroke:.15px #222;">RALEIGH NORTH CAROLINA</div>
<div class="t" style="right:428.60px;top:524.30px;font-size:10px;line-height:10px;color:#222;transform:scaleX(0.74);transform-origin:100% 0;">332.65 USD</div>
<div class="t" style="right:357.00px;top:524.30px;font-size:10px;line-height:10px;color:#222;transform:scaleX(0.74);transform-origin:100% 0;">332.65</div>
<svg class="a" style="left:460px;top:526px;" width="12.5" height="13" viewBox="0 0 12.5 13"><rect width="12.5" height="13" fill="#17923f"/><path d="M3.4 7.2 L5.4 9 L9.2 4.6" fill="none" stroke="#fff" stroke-width="1.6" stroke-linecap="round" stroke-linejoin="round"/></svg>
<svg class="a" style="left:485px;top:526px;" width="12" height="13" viewBox="0 0 12 13"><rect width="12" height="13" fill="#8c8c8c"/><path d="M4.2 4.7 L7.8 8.3 M7.8 4.7 L4.2 8.3" stroke="#fff" stroke-width="1.7" stroke-linecap="round"/></svg>
<svg class="a" style="left:509px;top:527px;" width="11" height="13" viewBox="0 0 11 13"><path d="M0 0 H11 V10 H6.8 L5.5 12 L4.2 10 H0 Z" fill="#1e9a48"/><path d="M2.5 2.5 H8 M2.5 4.5 H8 M2.5 6.5 H5.5" stroke="#fff" stroke-width=".9" opacity=".9"/></svg>
<svg class="a" style="left:43.3px;top:553px;" width="13" height="14" viewBox="0 0 13 14"><rect x=".6" y="2.9" width="11.8" height="9" rx="1" fill="#fff" stroke="#3b6fc0" stroke-width="1.1"/><rect x=".6" y="5" width="11.8" height="1.7" fill="#3b6fc0"/><circle cx="3" cy="9.7" r=".8" fill="#3b6fc0"/><path d="M5 9.9 H10.5" stroke="#9ab3dc" stroke-width=".7"/></svg>
<svg class="a" style="left:60.7px;top:553px;" width="12.5" height="14" viewBox="0 0 12.5 14"><ellipse cx="6.1" cy="7" rx="6.1" ry="7" fill="#1856b0"/><circle cx="6.2" cy="3.3" r="1.4" fill="#fff"/><path d="M4.6 5.5 H7.2 V10.6 H8.1 V11.8 H4.4 V10.6 H5.3 V6.7 H4.6 Z" fill="#fff"/></svg>
<svg class="a" style="left:79px;top:553px;" width="9.5" height="14" viewBox="0 0 9.5 14"><path d="M0 1.2 L.9 .4 L1.8 1.2 L2.7 .4 L3.6 1.2 L4.5 .4 L5.4 1.2 L6.3 .4 L7.2 1.2 L8.1 .4 L9 1.2 V14 H0 Z" fill="#1a5e2c"/><path d="M2 4.8 H7.3 M2 6.6 H7.3 M2 8.4 H7.3 M2 10.2 H5.3" stroke="#fff" stroke-width=".9" opacity=".85"/></svg>
<svg class="a" style="left:94.8px;top:553px;" width="11.5" height="13" viewBox="0 0 11.5 13"><rect x="0" y=".5" width="11.3" height="12.5" fill="#1a5e2c"/><path d="M2.4 6.8 L4.8 9.3 L9.2 3.6" fill="none" stroke="#fff" stroke-width="1.9" stroke-linecap="round" stroke-linejoin="round"/></svg>
<svg class="a" style="left:111px;top:553px;" width="13" height="14" viewBox="0 0 13 14"><g stroke="#0f5a22" stroke-width="1"><path d="M6.5 6.7 L9.5 1.3 M6.5 6.7 L1.3 8.7 M6.5 6.7 L12 7.7 M6.5 6.7 L7.4 12.6 M6.5 6.7 L2.9 3.1"/></g><circle cx="6.5" cy="6.7" r="2.2" fill="#0f5a22"/><circle cx="9.5" cy="1.3" r="1.2" fill="#0f5a22"/><circle cx="1.3" cy="8.7" r="1.2" fill="#0f5a22"/><circle cx="12" cy="7.7" r="1.2" fill="#0f5a22"/><circle cx="7.4" cy="12.6" r="1.2" fill="#0f5a22"/><circle cx="2.9" cy="3.1" r="1.1" fill="#0f5a22"/></svg>
<svg class="a" style="left:127.6px;top:552.2px;" width="16.5" height="15.5" viewBox="0 0 16.5 15.5"><circle cx="3.5" cy="2.2" r="1.9" fill="#9ec7aa"/><circle cx="13" cy="2.2" r="1.9" fill="#9ec7aa"/><path d="M0 7.8 Q0 4.8 3.5 4.8 Q6 4.8 6.5 6.6 L5 7.8 Z" fill="#9ec7aa"/><path d="M16.5 7.8 Q16.5 4.8 13 4.8 Q10.5 4.8 10 6.6 L11.5 7.8 Z" fill="#9ec7aa"/><circle cx="8.2" cy="6.3" r="2.6" fill="#135e2a"/><path d="M3.2 15.2 Q3.2 9.6 8.2 9.6 Q13.2 9.6 13.2 15.2 Z" fill="#135e2a"/></svg>
<svg class="a" style="left:146px;top:553px;" width="12.5" height="14" viewBox="0 0 12.5 14"><path d="M1.2 1.3 L1.2 14" stroke="#f6a81c" stroke-width="1.5"/><path d="M1.6 1.5 Q4.5 -.2 7 2 Q9 3.4 12 2.6 L9.8 5.8 L11.2 8.6 Q8.2 9.6 6.2 7.9 Q3.8 6 1.6 7.4 Z" fill="#f6a81c"/></svg>
<div class="a" style="left:20.5px;top:574.5px;width:432.5px;height:57.5px;background:#f0fafe;"></div>
<div class="a" style="left:453px;top:574.5px;width:76.5px;height:57.5px;background:#fffbf1;"></div>
<div class="a" style="left:20.5px;top:631.0px;width:509.0px;height:1px;background:#e3edf0;"></div>
<div class="a" style="left:28.2px;top:583.3px;width:8px;height:8px;background:#fff;border:1px solid #a9a9a9;border-radius:2px;box-sizing:border-box;"></div>
<div class="t" style="left:43.1px;top:581.80px;font-size:10px;line-height:10px;color:#3d5de6;transform:scaleX(0.68);transform-origin:0 0;">03/26/2025</div>
<div class="t" style="left:79.9px;top:581.80px;font-size:10px;line-height:10px;color:#222;transform:scaleX(0.74);transform-origin:0 0;">Meals -Self while Traveling</div>
<div class="t" style="left:43.1px;top:595.56px;font-size:8px;line-height:8px;color:#222;transform:scaleX(0.796);transform-origin:0 0;-webkit-text-stroke:.15px #222;">Allocation : 10-61600-100000-NON COGS</div>
<div class="t" style="left:205.7px;top:582.10px;font-size:10px;line-height:10px;color:#222;transform:scaleX(0.74);transform-origin:0 0;">SPO*MILKBAR 00000590</div>
<div class="t" style="left:205.7px;top:591.80px;font-size:10px;line-height:10px;color:#222;transform:scaleX(0.74);transform-origin:0 0;">RALEIGH NC</div>
<div class="t" style="left:205.7px;top:608.16px;font-size:8px;line-height:8px;color:#222;transform:scaleX(0.798);transform-origin:0 0;-webkit-text-stroke:.15px #222;">RALEIGH NORTH CAROLINA</div>
<div class="t" style="right:428.60px;top:581.80px;font-size:10px;line-height:10px;color:#222;transform:scaleX(0.74);transform-origin:100% 0;">42.72 USD</div>
<div class="t" style="right:357.00px;top:581.80px;font-size:10px;line-height:10px;color:#222;transform:scaleX(0.74);transform-origin:100% 0;">42.72</div>
<svg class="a" style="left:460px;top:583px;" width="12.5" height="13" viewBox="0 0 12.5 13"><rect width="12.5" height="13" fill="#17923f"/><path d="M3.4 7.2 L5.4 9 L9.2 4.6" fill="none" stroke="#fff" stroke-width="1.6" stroke-linecap="round" stroke-linejoin="round"/></svg>
<svg class="a" style="left:485px;top:583px;" width="12" height="13" viewBox="0 0 12 13"><rect width="12" height="13" fill="#8c8c8c"/><path d="M4.2 4.7 L7.8 8.3 M7.8 4.7 L4.2 8.3" stroke="#fff" stroke-width="1.7" stroke-linecap="round"/></svg>
<svg class="a" style="left:509px;top:584px;" width="11" height="13" viewBox="0 0 11 13"><path d="M0 0 H11 V10 H6.8 L5.5 12 L4.2 10 H0 Z" fill="#1e9a48"/><path d="M2.5 2.5 H8 M2.5 4.5 H8 M2.5 6.5 H5.5" stroke="#fff" stroke-width=".9" opacity=".9"/></svg>
<svg class="a" style="left:43.3px;top:610px;" width="13" height="14" viewBox="0 0 13 14"><rect x=".6" y="2.9" width="11.8" height="9" rx="1" fill="#fff" stroke="#3b6fc0" stroke-width="1.1"/><rect x=".6" y="5" width="11.8" height="1.7" fill="#3b6fc0"/><circle cx="3" cy="9.7" r=".8" fill="#3b6fc0"/><path d="M5 9.9 H10.5" stroke="#9ab3dc" stroke-width=".7"/></svg>
<svg class="a" style="left:60.7px;top:610px;" width="12.5" height="14" viewBox="0 0 12.5 14"><ellipse cx="6.1" cy="7" rx="6.1" ry="7" fill="#1856b0"/><circle cx="6.2" cy="3.3" r="1.4" fill="#fff"/><path d="M4.6 5.5 H7.2 V10.6 H8.1 V11.8 H4.4 V10.6 H5.3 V6.7 H4.6 Z" fill="#fff"/></svg>
<svg class="a" style="left:79px;top:610px;" width="9.5" height="14" viewBox="0 0 9.5 14"><path d="M0 1.2 L.9 .4 L1.8 1.2 L2.7 .4 L3.6 1.2 L4.5 .4 L5.4 1.2 L6.3 .4 L7.2 1.2 L8.1 .4 L9 1.2 V14 H0 Z" fill="#1a5e2c"/><path d="M2 4.8 H7.3 M2 6.6 H7.3 M2 8.4 H7.3 M2 10.2 H5.3" stroke="#fff" stroke-width=".9" opacity=".85"/></svg>
<svg class="a" style="left:94.8px;top:610px;" width="11.5" height="13" viewBox="0 0 11.5 13"><rect x="0" y=".5" width="11.3" height="12.5" fill="#fba919"/><path d="M2.4 6.8 L4.8 9.3 L9.2 3.6" fill="none" stroke="#fff" stroke-width="1.9" stroke-linecap="round" stroke-linejoin="round"/></svg>
<svg class="a" style="left:111px;top:610px;" width="13" height="14" viewBox="0 0 13 14"><g stroke="#0f5a22" stroke-width="1"><path d="M6.5 6.7 L9.5 1.3 M6.5 6.7 L1.3 8.7 M6.5 6.7 L12 7.7 M6.5 6.7 L7.4 12.6 M6.5 6.7 L2.9 3.1"/></g><circle cx="6.5" cy="6.7" r="2.2" fill="#0f5a22"/><circle cx="9.5" cy="1.3" r="1.2" fill="#0f5a22"/><circle cx="1.3" cy="8.7" r="1.2" fill="#0f5a22"/><circle cx="12" cy="7.7" r="1.2" fill="#0f5a22"/><circle cx="7.4" cy="12.6" r="1.2" fill="#0f5a22"/><circle cx="2.9" cy="3.1" r="1.1" fill="#0f5a22"/></svg>
<div class="a" style="left:20.5px;top:632.0px;width:432.5px;height:57.5px;background:#fff;"></div>
<div class="a" style="left:453px;top:632.0px;width:76.5px;height:57.5px;background:#fffbf1;"></div>
<div class="a" style="left:20.5px;top:688.5px;width:509.0px;height:1px;background:#e3edf0;"></div>
<div class="a" style="left:28.2px;top:640.8px;width:8px;height:8px;background:#fff;border:1px solid #a9a9a9;border-radius:2px;box-sizing:border-box;"></div>
<div class="t" style="left:43.1px;top:639.30px;font-size:10px;line-height:10px;color:#3d5de6;transform:scaleX(0.68);transform-origin:0 0;">03/27/2025</div>
<div class="t" style="left:79.9px;top:639.30px;font-size:10px;line-height:10px;color:#222;transform:scaleX(0.74);transform-origin:0 0;">Meals -Self while Traveling</div>
<div class="t" style="left:43.1px;top:653.06px;font-size:8px;line-height:8px;color:#222;transform:scaleX(0.796);transform-origin:0 0;-webkit-text-stroke:.15px #222;">Allocation : 10-61600-100000-NON COGS</div>
<div class="t" style="left:205.7px;top:639.60px;font-size:10px;line-height:10px;color:#222;transform:scaleX(0.74);transform-origin:0 0;">WALGREENS #16122 000</div>
<div class="t" style="left:205.7px;top:649.30px;font-size:10px;line-height:10px;color:#222;transform:scaleX(0.74);transform-origin:0 0;">SARASOTA FL</div>
<div class="t" style="left:205.7px;top:665.66px;font-size:8px;line-height:8px;color:#222;transform:scaleX(0.798);transform-origin:0 0;-webkit-text-stroke:.15px #222;">SARASOTA FLORIDA</div>
<div class="t" style="right:428.60px;top:639.30px;font-size:10px;line-height:10px;color:#222;transform:scaleX(0.74);transform-origin:100% 0;">10.74 USD</div>
<div class="t" style="right:357.00px;top:639.30px;font-size:10px;line-height:10px;color:#222;transform:scaleX(0.74);transform-origin:100% 0;">10.74</div>
<svg class="a" style="left:460px;top:641px;" width="12.5" height="13" viewBox="0 0 12.5 13"><rect width="12.5" height="13" fill="#17923f"/><path d="M3.4 7.2 L5.4 9 L9.2 4.6" fill="none" stroke="#fff" stroke-width="1.6" stroke-linecap="round" stroke-linejoin="round"/></svg>
<svg class="a" style="left:485px;top:641px;" width="12" height="13" viewBox="0 0 12 13"><rect width="12" height="13" fill="#8c8c8c"/><path d="M4.2 4.7 L7.8 8.3 M7.8 4.7 L4.2 8.3" stroke="#fff" stroke-width="1.7" stroke-linecap="round"/></svg>
<svg class="a" style="left:509px;top:642px;" width="11" height="13" viewBox="0 0 11 13"><path d="M0 0 H11 V10 H6.8 L5.5 12 L4.2 10 H0 Z" fill="#1e9a48"/><path d="M2.5 2.5 H8 M2.5 4.5 H8 M2.5 6.5 H5.5" stroke="#fff" stroke-width=".9" opacity=".9"/></svg>
<svg class="a" style="left:43.3px;top:668px;" width="13" height="14" viewBox="0 0 13 14"><rect x=".6" y="2.9" width="11.8" height="9" rx="1" fill="#fff" stroke="#3b6fc0" stroke-width="1.1"/><rect x=".6" y="5" width="11.8" height="1.7" fill="#3b6fc0"/><circle cx="3" cy="9.7" r=".8" fill="#3b6fc0"/><path d="M5 9.9 H10.5" stroke="#9ab3dc" stroke-width=".7"/></svg>
<svg class="a" style="left:60.7px;top:668px;" width="12.5" height="14" viewBox="0 0 12.5 14"><ellipse cx="6.1" cy="7" rx="6.1" ry="7" fill="#1856b0"/><circle cx="6.2" cy="3.3" r="1.4" fill="#fff"/><path d="M4.6 5.5 H7.2 V10.6 H8.1 V11.8 H4.4 V10.6 H5.3 V6.7 H4.6 Z" fill="#fff"/></svg>
<svg class="a" style="left:79px;top:668px;" width="9.5" height="14" viewBox="0 0 9.5 14"><path d="M0 1.2 L.9 .4 L1.8 1.2 L2.7 .4 L3.6 1.2 L4.5 .4 L5.4 1.2 L6.3 .4 L7.2 1.2 L8.1 .4 L9 1.2 V14 H0 Z" fill="#1a5e2c"/><path d="M2 4.8 H7.3 M2 6.6 H7.3 M2 8.4 H7.3 M2 10.2 H5.3" stroke="#fff" stroke-width=".9" opacity=".85"/></svg>
<svg class="a" style="left:94.8px;top:668px;" width="11.5" height="13" viewBox="0 0 11.5 13"><rect x="0" y=".5" width="11.3" height="12.5" fill="#fba919"/><path d="M2.4 6.8 L4.8 9.3 L9.2 3.6" fill="none" stroke="#fff" stroke-width="1.9" stroke-linecap="round" stroke-linejoin="round"/></svg>
<svg class="a" style="left:111px;top:668px;" width="13" height="14" viewBox="0 0 13 14"><g stroke="#0f5a22" stroke-width="1"><path d="M6.5 6.7 L9.5 1.3 M6.5 6.7 L1.3 8.7 M6.5 6.7 L12 7.7 M6.5 6.7 L7.4 12.6 M6.5 6.7 L2.9 3.1"/></g><circle cx="6.5" cy="6.7" r="2.2" fill="#0f5a22"/><circle cx="9.5" cy="1.3" r="1.2" fill="#0f5a22"/><circle cx="1.3" cy="8.7" r="1.2" fill="#0f5a22"/><circle cx="12" cy="7.7" r="1.2" fill="#0f5a22"/><circle cx="7.4" cy="12.6" r="1.2" fill="#0f5a22"/><circle cx="2.9" cy="3.1" r="1.1" fill="#0f5a22"/></svg>
<div class="a" style="left:529.0px;top:248.5px;width:1.2px;height:400px;background:#e3e6e8;"></div>
<div class="a" style="left:547px;top:198.5px;width:253.5px;height:243px;background:#fff;border:1px solid #e2e8ea;border-radius:4px;box-sizing:border-box;box-shadow:0 0 2px rgba(0,0,0,.06);"></div>
<div class="t" style="left:556.8px;top:206.69px;font-size:10px;line-height:10px;color:#111;font-weight:bold;transform:scaleX(0.79);transform-origin:0 0;">Summary and Totals</div>
<svg class="a" style="left:784px;top:208.5px;" width="7" height="4" viewBox="0 0 7 4"><path d="M0 3.6 L3.5 0 L7 3.6 Z" fill="#2457d6"/></svg>
<div class="a" style="left:555px;top:222.3px;width:237px;height:1.5px;background:#e6eaec;"></div>
<div class="a" style="left:548.5px;top:223px;width:251px;height:1px;background:#f2f4f5;"></div>
<div class="t" style="left:555.7px;top:230.99px;font-size:10px;line-height:10px;color:#111;font-weight:bold;transform:scaleX(0.79);transform-origin:0 0;">Approval History</div>
<svg class="a" style="left:784px;top:232.7px;" width="7" height="4" viewBox="0 0 7 4"><path d="M0 0 L7 0 L3.5 3.6 Z" fill="#2457d6"/></svg>
<div class="a" style="left:555.8px;top:248.5px;width:236.2px;height:19.3px;background:#ecfbfd;border-bottom:1px solid #e3eef0;box-sizing:border-box;"></div>
<div class="t" style="left:558.6px;top:253.29px;font-size:10px;line-height:10px;color:#111;font-weight:bold;transform:scaleX(0.74);transform-origin:0 0;">Actioner</div>
<div class="t" style="left:624.2px;top:253.29px;font-size:10px;line-height:10px;color:#111;font-weight:bold;transform:scaleX(0.74);transform-origin:0 0;">Actions</div>
<div class="t" style="left:680.7px;top:253.29px;font-size:10px;line-height:10px;color:#111;font-weight:bold;transform:scaleX(0.74);transform-origin:0 0;">Date</div>
<div class="t" style="left:738px;top:253.29px;font-size:10px;line-height:10px;color:#111;font-weight:bold;transform:scaleX(0.74);transform-origin:0 0;">Notes</div>
<div class="t" style="left:556.8px;top:269.69px;font-size:10px;line-height:10px;color:#222;transform:scaleX(0.74);transform-origin:0 0;">JOHN SABOL</div>
<div class="t" style="left:622.7px;top:269.69px;font-size:10px;line-height:10px;color:#222;transform:scaleX(0.74);transform-origin:0 0;">Submitted</div>
<div class="t" style="left:679.4px;top:269.69px;font-size:10px;line-height:10px;color:#222;transform:scaleX(0.7);transform-origin:0 0;">04/01/2025</div>
<div class="a" style="left:548px;top:283px;width:252px;height:2px;background:#e4e8ea;"></div>
<div class="t" style="left:555.7px;top:294.80px;font-size:10px;line-height:10px;color:#111;font-weight:bold;transform:scaleX(0.79);transform-origin:0 0;">Messages Panel</div>
<div class="a" style="left:555.5px;top:310.5px;width:236.5px;height:2px;background:#1f9a4a;"></div>
<svg class="a" style="left:639.5px;top:318.5px;" width="9" height="9" viewBox="0 0 9 9"><path d="M0 4 H2 V9 H0 Z" fill="#1f9a4a"/><path d="M2.8 4.2 L4.8 .6 Q6 .4 6 1.8 L5.6 3.6 H8.2 Q9 3.8 8.8 4.8 L8 8.2 Q7.8 8.8 7 8.8 H2.8 Z" fill="none" stroke="#1f9a4a" stroke-width=".9"/></svg>
<div class="t" style="left:650px;top:318.50px;font-size:10px;line-height:10px;color:#17924a;transform:scaleX(0.7);transform-origin:0 0;-webkit-text-stroke:.2px #17924a;">Ready to approve!</div>
<div class="a" style="left:555.5px;top:335px;width:236.5px;height:2px;background:#1f9a4a;"></div>
<div class="t" style="left:555.7px;top:343.19px;font-size:10px;line-height:10px;color:#111;font-weight:bold;transform:scaleX(0.79);transform-origin:0 0;">Action Panel</div>
<div class="a" style="left:556.4px;top:360.8px;width:43.8px;height:36.3px;background:linear-gradient(180deg,#2f78de 0%,#2462c4 50%,#1b4c9e 100%);border-radius:3px;box-shadow:0 1px 1px rgba(0,0,0,.25);"></div>
<svg class="a" style="left:572.8px;top:365.8px;" width="11" height="11" viewBox="0 0 11 11"><path d="M3.2 6.2 V3.2 Q3.2 2.4 3.9 2.4 Q4.6 2.4 4.6 3.2 V5.2 M4.6 5 V1.9 Q4.6 1.1 5.3 1.1 Q6 1.1 6 1.9 V5 M6 5 V2.3 Q6 1.5 6.7 1.5 Q7.4 1.5 7.4 2.3 V5.2 M7.4 5.4 V3.4 Q7.4 2.7 8.1 2.7 Q8.8 2.7 8.8 3.4 V7.2 Q8.8 10.4 5.9 10.4 Q4.2 10.4 3.2 9 L1.6 6.6 Q1.2 5.8 1.9 5.5 Q2.5 5.3 3.2 6.2" fill="none" stroke="#fff" stroke-width=".85" stroke-linejoin="round"/></svg>
<div class="t" style="left:378.30px;width:400px;text-align:center;top:381.29px;font-size:7px;line-height:7px;color:#fff;font-weight:bold;transform:scaleX(0.78);transform-origin:50% 0;">Hold</div>
<div class="a" style="left:603.9px;top:360.8px;width:43.8px;height:36.3px;background:linear-gradient(180deg,#2f78de 0%,#2462c4 50%,#1b4c9e 100%);border-radius:3px;box-shadow:0 1px 1px rgba(0,0,0,.25);"></div>
<svg class="a" style="left:620.3px;top:365.8px;" width="11" height="11" viewBox="0 0 11 11"><path d="M1 5 Q1 1.5 4.5 1.5 Q8 1.5 8 5 Q8 8 4.5 8 L2.5 9.2 L3 7.6 Q1 6.8 1 5 Z" fill="none" stroke="#fff" stroke-width=".9"/><path d="M6 8.8 Q9.5 9.5 10 7 Q10.5 5 8.5 4.2" fill="none" stroke="#fff" stroke-width=".9"/></svg>
<div class="t" style="left:425.80px;width:400px;text-align:center;top:381.29px;font-size:7px;line-height:7px;color:#fff;font-weight:bold;transform:scaleX(0.78);transform-origin:50% 0;">Consult</div>
<div class="a" style="left:651.6px;top:360.8px;width:43.8px;height:36.3px;background:linear-gradient(180deg,#2f78de 0%,#2462c4 50%,#1b4c9e 100%);border-radius:3px;box-shadow:0 1px 1px rgba(0,0,0,.25);"></div>
<svg class="a" style="left:668.0px;top:365.8px;" width="11" height="11" viewBox="0 0 11 11"><rect x="2.8" y="1" width="5.4" height="2.6" fill="none" stroke="#fff" stroke-width=".9"/><rect x="1" y="3.6" width="9" height="4.4" rx="1" fill="none" stroke="#fff" stroke-width=".9"/><rect x="3" y="6.5" width="5" height="3.5" fill="#2462c4" stroke="#fff" stroke-width=".9"/></svg>
<div class="t" style="left:473.50px;width:400px;text-align:center;top:381.29px;font-size:7px;line-height:7px;color:#fff;font-weight:bold;transform:scaleX(0.78);transform-origin:50% 0;">Print</div>
<div class="a" style="left:698.6px;top:360.8px;width:43.8px;height:36.3px;background:linear-gradient(180deg,#2f78de 0%,#2462c4 50%,#1b4c9e 100%);border-radius:3px;box-shadow:0 1px 1px rgba(0,0,0,.25);"></div>
<svg class="a" style="left:715.0px;top:365.8px;" width="11" height="11" viewBox="0 0 11 11"><path d="M7.5 3 L3.3 7.5 Q2.2 8.8 3.3 9.6 Q4.4 10.4 5.5 9.2 L9.3 4.8 Q10.8 3 9.5 1.8 Q8.2 .6 6.6 2.2 L2.4 6.8" fill="none" stroke="#fff" stroke-width=".9" stroke-linecap="round"/></svg>
<div class="t" style="left:520.50px;width:400px;text-align:center;top:381.29px;font-size:7px;line-height:7px;color:#fff;font-weight:bold;transform:scaleX(0.78);transform-origin:50% 0;">Add E-Docs</div>
<div class="a" style="left:746.3px;top:360.8px;width:43.8px;height:36.3px;background:linear-gradient(180deg,#2f78de 0%,#2462c4 50%,#1b4c9e 100%);border-radius:3px;box-shadow:0 1px 1px rgba(0,0,0,.25);"></div>
<svg class="a" style="left:762.6999999999999px;top:365.8px;" width="11" height="11" viewBox="0 0 11 11"><circle cx="5.5" cy="5.5" r="1.8" fill="#fff"/><circle cx="5.5" cy="1" r="1" fill="#fff"/><circle cx="1.3" cy="4" r="1" fill="#fff"/><circle cx="9.7" cy="4" r="1" fill="#fff"/><circle cx="3" cy="9.6" r="1" fill="#fff"/><circle cx="8" cy="9.6" r="1" fill="#fff"/><path d="M5.5 5.5 L5.5 1 M5.5 5.5 L1.3 4 M5.5 5.5 L9.7 4 M5.5 5.5 L3 9.6 M5.5 5.5 L8 9.6" stroke="#fff" stroke-width=".7"/></svg>
<div class="t" style="left:568.20px;width:400px;text-align:center;top:381.29px;font-size:7px;line-height:7px;color:#fff;font-weight:bold;transform:scaleX(0.78);transform-origin:50% 0;">Allocate</div>
<div class="a" style="left:556.4px;top:403.7px;width:114.5px;height:26.6px;background:linear-gradient(180deg,#2f78de 0%,#2462c4 50%,#1b4c9e 100%);border-radius:3px;box-shadow:0 1px 1px rgba(0,0,0,.25);"></div>
<svg class="a" style="left:598px;top:410.5px;" width="9" height="11" viewBox="0 0 9 11"><path d="M1 1 H6.5 L8.3 2.8 V10 H1 Z" fill="none" stroke="#fff" stroke-width=".9" stroke-linejoin="round"/><rect x="3" y="1" width="3" height="2.6" fill="none" stroke="#fff" stroke-width=".8"/><rect x="2.8" y="6.2" width="3.8" height="3.8" fill="none" stroke="#fff" stroke-width=".8"/></svg>
<div class="t" style="left:610.5px;top:411.90px;font-size:10px;line-height:10px;color:#fff;transform:scaleX(0.74);transform-origin:0 0;-webkit-text-stroke:.2px #fff;">Save</div>
<div class="a" style="left:676.8px;top:403.7px;width:115.2px;height:26.6px;background:linear-gradient(180deg,#10aa4c 0%,#0c9944 50%,#0b8a3b 100%);border-radius:3px;box-shadow:0 1px 1px rgba(0,0,0,.25);"></div>
<svg class="a" style="left:711.5px;top:412px;" width="11" height="8" viewBox="0 0 11 8"><path d="M0 4 H6.5 M4.3 1.5 L6.8 4 L4.3 6.5" fill="none" stroke="#fff" stroke-width=".9"/><path d="M6.5 .8 L9.6 4 L6.5 7.2 M8.7 .8 L11.8 4 L8.7 7.2" fill="none" stroke="#fff" stroke-width=".9"/></svg>
<div class="t" style="left:725.5px;top:411.90px;font-size:10px;line-height:10px;color:#fff;transform:scaleX(0.74);transform-origin:0 0;-webkit-text-stroke:.2px #fff;">Approve</div>
</div>
<div class="a" style="left:822px;top:108px;width:370px;height:229px;background:linear-gradient(90deg,#14304e,#1a3654 50%,#1f3d5e);"></div>
<div class="a" style="left:884px;top:108px;width:22px;height:3px;background:#3b0c3c;border-radius:11px 11px 0 0;"></div>
<div class="a" style="left:994px;top:108px;width:22px;height:3px;background:#3b0c3c;border-radius:11px 11px 0 0;"></div>
<div class="a" style="left:1105px;top:108px;width:22px;height:3px;background:#3b0c3c;border-radius:11px 11px 0 0;"></div>
<div class="a" style="left:823.5px;top:111px;width:364px;height:223.5px;background:#fff;border-radius:5px;"></div>
<div class="a" style="left:1181.5px;top:104px;width:11.5px;height:11.5px;border-radius:50%;background:#fff;box-shadow:-0.5px 0.8px 0.6px #56606a;"></div>
<svg class="a" style="left:1185px;top:107.8px;" width="4.6" height="4.6" viewBox="0 0 4.6 4.6"><path d="M.5 .5 L4.1 4.1 M4.1 .5 L.5 4.1" stroke="#f21c1c" stroke-width="1.2" stroke-linecap="round"/></svg>
<svg class="a" style="left:836.2px;top:116.3px;" width="7" height="7.5" viewBox="0 0 7 7.5"><rect x="0" y="0.6" width="7" height="4.8" rx=".8" fill="#2f66c8"/><path d="M1.3 5 L.9 7.3 M5.7 5 L6.1 7.3" stroke="#2f66c8" stroke-width="1.2"/><path d="M3.5 0 V1" stroke="#2f66c8" stroke-width=".8"/><path d="M1.8 4 L3 2.8 L4 3.5 L5.3 2" fill="none" stroke="#9bbcf0" stroke-width=".5"/></svg>
<div class="t" style="left:850.30px;top:116.09px;font-size:8.5px;line-height:8.5px;color:#111;font-weight:bold;transform:scaleX(0.81);transform-origin:0 0;">Spendings</div>
<div class="a" style="left:1066px;top:113.2px;width:109px;height:13.5px;background:#e9eef8;border-radius:7px;"></div>
<div class="a" style="left:1069px;top:114.7px;width:40.7px;height:10.6px;background:#fff;border-radius:5.3px;"></div>
<div class="t" style="left:1078.30px;top:117.62px;font-size:6px;line-height:6px;color:#222;font-weight:bold;transform:scaleX(0.8);transform-origin:0 0;">My Spend</div>
<div class="t" style="left:1124.20px;top:117.62px;font-size:6px;line-height:6px;color:#8a8a8a;font-weight:bold;transform:scaleX(0.74);transform-origin:0 0;">Employee Spend</div>
<div class="a" style="left:825px;top:130.2px;width:360px;height:1px;background:#e6e8ea;"></div>
<div class="a" style="left:1174px;top:132px;width:1px;height:200px;background:#f3f7fa;"></div>
<div class="a" style="left:1163.3px;top:143.5px;width:6px;height:6px;border:1px solid #e2e2e2;border-radius:1.5px;box-sizing:border-box;"></div>
<div class="a" style="left:1165.2px;top:146.3px;width:2.2px;height:0.7px;background:#bbb;"></div>
<div class="a" style="left:1178px;top:145.1px;width:9.5px;height:9.3px;background:#0b8a1c;"></div>
<div class="a" style="left:1178px;top:158.3px;width:9.5px;height:9.3px;background:#888;"></div>
<div class="a" style="left:1178px;top:170.8px;width:9.5px;height:9.3px;background:#888;"></div>
<svg class="a" style="left:1180px;top:147.6px;" width="6" height="5" viewBox="0 0 6 5"><path d="M0 5 L5.5 0 V5 Z" fill="#fff" opacity=".75"/></svg>
<svg class="a" style="left:1180px;top:160.5px;" width="6" height="5.4" viewBox="0 0 6 5.4"><path d="M.5 0 V5 H5.6 M1 4 L2.8 2.3 L3.8 3.2 L5.5 1.2" fill="none" stroke="#fff" stroke-width=".7" opacity=".75"/></svg>
<svg class="a" style="left:1180.2px;top:173.0px;" width="5.4" height="5.4" viewBox="0 0 5.4 5.4"><circle cx="2.7" cy="2.7" r="2.6" fill="#fff" opacity=".9"/><path d="M2.7 0 V5.4" stroke="#888" stroke-width=".6"/></svg>
<div class="t" style="left:810.00px;width:400px;text-align:center;top:144.29px;font-size:7px;line-height:7px;color:#222;font-weight:bold;transform:scaleX(0.8);transform-origin:50% 0;">Total Spend: 4,225.40</div>
<div class="t" style="right:430.40px;top:283.28px;font-size:5.5px;line-height:5.5px;color:#555;transform:scaleX(0.85);transform-origin:100% 0;">0</div>
<div class="a" style="left:850px;top:258.75px;width:319px;height:0;border-top:1px dotted #e9e9e9;"></div>
<div class="t" style="right:430.40px;top:257.13px;font-size:5.5px;line-height:5.5px;color:#555;transform:scaleX(0.85);transform-origin:100% 0;">300</div>
<div class="a" style="left:850px;top:232.60px;width:319px;height:0;border-top:1px dotted #e9e9e9;"></div>
<div class="t" style="right:430.40px;top:230.98px;font-size:5.5px;line-height:5.5px;color:#555;transform:scaleX(0.85);transform-origin:100% 0;">600</div>
<div class="a" style="left:850px;top:206.45px;width:319px;height:0;border-top:1px dotted #e9e9e9;"></div>
<div class="t" style="right:430.40px;top:204.83px;font-size:5.5px;line-height:5.5px;color:#555;transform:scaleX(0.85);transform-origin:100% 0;">900</div>
<div class="a" style="left:850px;top:180.30px;width:319px;height:0;border-top:1px dotted #e9e9e9;"></div>
<div class="t" style="right:430.40px;top:178.68px;font-size:5.5px;line-height:5.5px;color:#555;transform:scaleX(0.85);transform-origin:100% 0;">1.2K</div>
<div class="a" style="left:850px;top:154.15px;width:319px;height:0;border-top:1px dotted #e9e9e9;"></div>
<div class="t" style="right:430.40px;top:152.53px;font-size:5.5px;line-height:5.5px;color:#555;transform:scaleX(0.85);transform-origin:100% 0;">1.5K</div>
<div class="a" style="left:850px;top:285.4px;width:319px;height:1px;background:#d6d6d6;"></div>
<div class="t" style="left:831px;top:236px;font-size:5.5px;line-height:6px;color:#333;font-weight:bold;font-style:italic;transform:rotate(-90deg) scaleX(.85);transform-origin:0 0;">Amount (USD)</div>
<div class="t" style="left:663.30px;width:400px;text-align:center;top:287.12px;font-size:6px;line-height:6px;color:#444;transform:scaleX(0.85);transform-origin:50% 0;">Aug</div>
<div class="a" style="left:854.8px;top:285.2px;width:17px;height:0.7px;background:#a8cfb4;"></div>
<div class="t" style="left:663.30px;width:400px;text-align:center;top:281.28px;font-size:4px;line-height:4px;color:#555;transform:scaleX(0.8);transform-origin:50% 0;">0</div>
<div class="t" style="left:689.90px;width:400px;text-align:center;top:287.12px;font-size:6px;line-height:6px;color:#444;transform:scaleX(0.85);transform-origin:50% 0;">Sep</div>
<div class="a" style="left:881.4px;top:285.2px;width:17px;height:0.7px;background:#a8cfb4;"></div>
<div class="t" style="left:689.90px;width:400px;text-align:center;top:281.28px;font-size:4px;line-height:4px;color:#555;transform:scaleX(0.8);transform-origin:50% 0;">0</div>
<div class="t" style="left:716.50px;width:400px;text-align:center;top:287.12px;font-size:6px;line-height:6px;color:#444;transform:scaleX(0.85);transform-origin:50% 0;">Oct</div>
<div class="a" style="left:908.5px;top:265.40047999999996px;width:16px;height:19.999519999999997px;background:#45cc89;"></div>
<div class="t" style="left:716.50px;width:400px;text-align:center;top:261.88px;font-size:4px;line-height:4px;color:#333;transform:scaleX(0.8);transform-origin:50% 0;">229.44</div>
<div class="t" style="left:743.10px;width:400px;text-align:center;top:287.12px;font-size:6px;line-height:6px;color:#444;transform:scaleX(0.85);transform-origin:50% 0;">Nov</div>
<div class="a" style="left:934.6px;top:285.2px;width:17px;height:0.7px;background:#a8cfb4;"></div>
<div class="t" style="left:743.10px;width:400px;text-align:center;top:281.28px;font-size:4px;line-height:4px;color:#555;transform:scaleX(0.8);transform-origin:50% 0;">0</div>
<div class="t" style="left:769.70px;width:400px;text-align:center;top:287.12px;font-size:6px;line-height:6px;color:#444;transform:scaleX(0.85);transform-origin:50% 0;">Dec</div>
<div class="a" style="left:961.7px;top:270.1458333333333px;width:16px;height:15.254166666666665px;background:#f96c7c;"></div>
<div class="a" style="left:961.7px;top:249.80113333333333px;width:16px;height:20.3447px;background:#45cc89;"></div>
<div class="t" style="left:769.70px;width:400px;text-align:center;top:246.28px;font-size:4px;line-height:4px;color:#333;transform:scaleX(0.8);transform-origin:50% 0;">408.40</div>
<div class="t" style="left:796.30px;width:400px;text-align:center;top:287.12px;font-size:6px;line-height:6px;color:#444;transform:scaleX(0.85);transform-origin:50% 0;">Jan</div>
<div class="a" style="left:988.3px;top:250.5333333333333px;width:16px;height:34.86666666666666px;background:#fec45a;"></div>
<div class="a" style="left:988.3px;top:218.28166666666664px;width:16px;height:32.251666666666665px;background:#f96c7c;"></div>
<div class="a" style="left:988.3px;top:206.14806666666664px;width:16px;height:12.133599999999998px;background:#45cc89;"></div>
<div class="t" style="left:796.30px;width:400px;text-align:center;top:202.63px;font-size:4px;line-height:4px;color:#333;transform:scaleX(0.8);transform-origin:50% 0;">909.20</div>
<div class="t" style="left:822.90px;width:400px;text-align:center;top:287.12px;font-size:6px;line-height:6px;color:#444;transform:scaleX(0.85);transform-origin:50% 0;">Feb</div>
<div class="a" style="left:1014.9px;top:239.20166666666665px;width:16px;height:46.19833333333333px;background:#5865f0;"></div>
<div class="a" style="left:1014.9px;top:194.04933333333332px;width:16px;height:45.15233333333333px;background:#ef88b8;"></div>
<div class="a" style="left:1014.9px;top:159.88px;width:16px;height:34.16933333333333px;background:#45cc89;"></div>
<div class="t" style="left:822.90px;width:400px;text-align:center;top:156.36px;font-size:4px;line-height:4px;color:#333;transform:scaleX(0.8);transform-origin:50% 0;">1.44K</div>
<div class="t" style="left:849.50px;width:400px;text-align:center;top:287.12px;font-size:6px;line-height:6px;color:#444;transform:scaleX(0.85);transform-origin:50% 0;">Mar</div>
<div class="a" style="left:1041.5px;top:259.0756666666666px;width:16px;height:26.324333333333332px;background:#5865f0;"></div>
<div class="a" style="left:1041.5px;top:238.32999999999996px;width:16px;height:20.745666666666665px;background:#f96c7c;"></div>
<div class="a" style="left:1041.5px;top:200.67399999999995px;width:16px;height:37.656px;background:#33c8fa;"></div>
<div class="a" style="left:1041.5px;top:177.31333333333328px;width:16px;height:23.360666666666663px;background:#45cc89;"></div>
<div class="t" style="left:849.50px;width:400px;text-align:center;top:173.79px;font-size:4px;line-height:4px;color:#333;transform:scaleX(0.8);transform-origin:50% 0;">1.24K</div>
<div class="t" style="left:876.10px;width:400px;text-align:center;top:287.12px;font-size:6px;line-height:6px;color:#444;transform:scaleX(0.85);transform-origin:50% 0;">Apr</div>
<div class="a" style="left:1067.6px;top:285.2px;width:17px;height:0.7px;background:#a8cfb4;"></div>
<div class="t" style="left:876.10px;width:400px;text-align:center;top:281.28px;font-size:4px;line-height:4px;color:#555;transform:scaleX(0.8);transform-origin:50% 0;">0</div>
<div class="t" style="left:902.70px;width:400px;text-align:center;top:287.12px;font-size:6px;line-height:6px;color:#444;transform:scaleX(0.85);transform-origin:50% 0;">May</div>
<div class="a" style="left:1094.2px;top:285.2px;width:17px;height:0.7px;background:#a8cfb4;"></div>
<div class="t" style="left:902.70px;width:400px;text-align:center;top:281.28px;font-size:4px;line-height:4px;color:#555;transform:scaleX(0.8);transform-origin:50% 0;">0</div>
<div class="t" style="left:929.30px;width:400px;text-align:center;top:287.12px;font-size:6px;line-height:6px;color:#444;transform:scaleX(0.85);transform-origin:50% 0;">Jun</div>
<div class="a" style="left:1120.8px;top:285.2px;width:17px;height:0.7px;background:#a8cfb4;"></div>
<div class="t" style="left:929.30px;width:400px;text-align:center;top:281.28px;font-size:4px;line-height:4px;color:#555;transform:scaleX(0.8);transform-origin:50% 0;">0</div>
<div class="t" style="left:955.90px;width:400px;text-align:center;top:287.12px;font-size:6px;line-height:6px;color:#444;transform:scaleX(0.85);transform-origin:50% 0;">Jul</div>
<div class="a" style="left:1147.4px;top:285.2px;width:17px;height:0.7px;background:#a8cfb4;"></div>
<div class="t" style="left:955.90px;width:400px;text-align:center;top:281.28px;font-size:4px;line-height:4px;color:#555;transform:scaleX(0.8);transform-origin:50% 0;">0</div>
<div class="t" style="left:809.60px;width:400px;text-align:center;top:293.42px;font-size:6px;line-height:6px;color:#222;font-weight:bold;transform:scaleX(0.85);transform-origin:50% 0;">MONTH</div>
<svg class="a" style="left:853.4px;top:304.5px;" width="5.5" height="5" viewBox="0 0 5.5 5"><rect x="0" y="1.8" width="1.4" height="3.2" fill="#5865f0"/><rect x="2" y="0" width="1.4" height="5" fill="#5865f0"/><rect x="3.8" y="3" width="1.7" height="2" fill="#5865f0"/></svg>
<div class="t" style="left:860.20px;top:304.64px;font-size:5.8px;line-height:5.8px;color:#7a7a7a;transform:scaleX(0.76);transform-origin:0 0;">Airfare</div>
<svg class="a" style="left:853.4px;top:310.8px;" width="5.5" height="5" viewBox="0 0 5.5 5"><rect x="0" y="1.8" width="1.4" height="3.2" fill="#45cc89"/><rect x="2" y="0" width="1.4" height="5" fill="#45cc89"/><rect x="3.8" y="3" width="1.7" height="2" fill="#45cc89"/></svg>
<div class="t" style="left:860.20px;top:310.94px;font-size:5.8px;line-height:5.8px;color:#7a7a7a;transform:scaleX(0.76);transform-origin:0 0;">Other</div>
<svg class="a" style="left:916.7px;top:304px;" width="5.5" height="5" viewBox="0 0 5.5 5"><rect x="0" y="1.8" width="1.4" height="3.2" fill="#fec45a"/><rect x="2" y="0" width="1.4" height="5" fill="#fec45a"/><rect x="3.8" y="3" width="1.7" height="2" fill="#fec45a"/></svg>
<div class="t" style="left:923.30px;top:304.14px;font-size:5.8px;line-height:5.8px;color:#7a7a7a;transform:scaleX(0.76);transform-origin:0 0;">Fees-Continuing Ed &</div>
<div class="t" style="left:923.30px;top:309.74px;font-size:5.8px;line-height:5.8px;color:#7a7a7a;transform:scaleX(0.76);transform-origin:0 0;">Prof Licenses-Incl</div>
<div class="t" style="left:923.30px;top:315.34px;font-size:5.8px;line-height:5.8px;color:#7a7a7a;transform:scaleX(0.76);transform-origin:0 0;">educational materials</div>
<svg class="a" style="left:980.0px;top:304px;" width="5.5" height="5" viewBox="0 0 5.5 5"><rect x="0" y="1.8" width="1.4" height="3.2" fill="#f96c7c"/><rect x="2" y="0" width="1.4" height="5" fill="#f96c7c"/><rect x="3.8" y="3" width="1.7" height="2" fill="#f96c7c"/></svg>
<div class="t" style="left:986.80px;top:304.14px;font-size:5.8px;line-height:5.8px;color:#7a7a7a;transform:scaleX(0.76);transform-origin:0 0;">Meals -</div>
<div class="t" style="left:986.80px;top:309.74px;font-size:5.8px;line-height:5.8px;color:#7a7a7a;transform:scaleX(0.76);transform-origin:0 0;">Customers-Dinner</div>
<svg class="a" style="left:1043.7px;top:304.5px;" width="5.5" height="5" viewBox="0 0 5.5 5"><rect x="0" y="1.8" width="1.4" height="3.2" fill="#33c8fa"/><rect x="2" y="0" width="1.4" height="5" fill="#33c8fa"/><rect x="3.8" y="3" width="1.7" height="2" fill="#33c8fa"/></svg>
<div class="t" style="left:1050.00px;top:304.64px;font-size:5.8px;line-height:5.8px;color:#7a7a7a;transform:scaleX(0.76);transform-origin:0 0;">Meeting Rooms</div>
<svg class="a" style="left:1107.0px;top:304.5px;" width="5.5" height="5" viewBox="0 0 5.5 5"><rect x="0" y="1.8" width="1.4" height="3.2" fill="#ef88b8"/><rect x="2" y="0" width="1.4" height="5" fill="#ef88b8"/><rect x="3.8" y="3" width="1.7" height="2" fill="#ef88b8"/></svg>
<div class="t" style="left:1112.70px;top:304.64px;font-size:5.8px;line-height:5.8px;color:#7a7a7a;transform:scaleX(0.76);transform-origin:0 0;">Room Rent</div>
<div class="a" style="left:822px;top:383px;width:370px;height:228px;background:linear-gradient(90deg,#14304e,#1a3654 50%,#1f3d5e);"></div>
<div class="a" style="left:884px;top:383px;width:22px;height:3px;background:#3b0c3c;border-radius:11px 11px 0 0;"></div>
<div class="a" style="left:994px;top:383px;width:22px;height:3px;background:#3b0c3c;border-radius:11px 11px 0 0;"></div>
<div class="a" style="left:1105px;top:383px;width:22px;height:3px;background:#3b0c3c;border-radius:11px 11px 0 0;"></div>
<div class="a" style="left:823.5px;top:386px;width:364px;height:222.5px;background:#fff;border-radius:5px;"></div>
<div class="a" style="left:1181.5px;top:379px;width:11.5px;height:11.5px;border-radius:50%;background:#fff;box-shadow:-0.5px 0.8px 0.6px #56606a;"></div>
<svg class="a" style="left:1185px;top:382.8px;" width="4.6" height="4.6" viewBox="0 0 4.6 4.6"><path d="M.5 .5 L4.1 4.1 M4.1 .5 L.5 4.1" stroke="#f21c1c" stroke-width="1.2" stroke-linecap="round"/></svg>
<svg class="a" style="left:836.2px;top:391.3px;" width="7" height="7.5" viewBox="0 0 7 7.5"><rect x="0" y="0.6" width="7" height="4.8" rx=".8" fill="#2f66c8"/><path d="M1.3 5 L.9 7.3 M5.7 5 L6.1 7.3" stroke="#2f66c8" stroke-width="1.2"/><path d="M3.5 0 V1" stroke="#2f66c8" stroke-width=".8"/><path d="M1.8 4 L3 2.8 L4 3.5 L5.3 2" fill="none" stroke="#9bbcf0" stroke-width=".5"/></svg>
<div class="t" style="left:850.30px;top:391.09px;font-size:8.5px;line-height:8.5px;color:#111;font-weight:bold;transform:scaleX(0.81);transform-origin:0 0;">Spendings</div>
<div class="a" style="left:1066px;top:388.2px;width:109px;height:13.5px;background:#e9eef8;border-radius:7px;"></div>
<div class="a" style="left:1116.7px;top:389.7px;width:55.6px;height:10.6px;background:#fff;border-radius:5.3px;"></div>
<div class="t" style="left:1078.30px;top:392.62px;font-size:6px;line-height:6px;color:#8a8a8a;font-weight:bold;transform:scaleX(0.8);transform-origin:0 0;">My Spend</div>
<div class="t" style="left:1124.20px;top:392.62px;font-size:6px;line-height:6px;color:#222;font-weight:bold;transform:scaleX(0.74);transform-origin:0 0;">Employee Spend</div>
<div class="a" style="left:825px;top:405.2px;width:360px;height:1px;background:#e6e8ea;"></div>
<div class="a" style="left:1174px;top:407px;width:1px;height:200px;background:#f3f7fa;"></div>
<div class="a" style="left:1163.3px;top:418.5px;width:6px;height:6px;border:1px solid #e2e2e2;border-radius:1.5px;box-sizing:border-box;"></div>
<div class="a" style="left:1165.2px;top:421.3px;width:2.2px;height:0.7px;background:#bbb;"></div>
<div class="a" style="left:1178px;top:420.1px;width:9.5px;height:9.3px;background:#888;"></div>
<div class="a" style="left:1178px;top:433.3px;width:9.5px;height:9.3px;background:#888;"></div>
<div class="a" style="left:1178px;top:445.8px;width:9.5px;height:9.3px;background:#0b8a1c;"></div>
<svg class="a" style="left:1180px;top:422.6px;" width="6" height="5" viewBox="0 0 6 5"><path d="M0 5 L5.5 0 V5 Z" fill="#fff" opacity=".75"/></svg>
<svg class="a" style="left:1180px;top:435.5px;" width="6" height="5.4" viewBox="0 0 6 5.4"><path d="M.5 0 V5 H5.6 M1 4 L2.8 2.3 L3.8 3.2 L5.5 1.2" fill="none" stroke="#fff" stroke-width=".7" opacity=".75"/></svg>
<svg class="a" style="left:1180.2px;top:448.0px;" width="5.4" height="5.4" viewBox="0 0 5.4 5.4"><circle cx="2.7" cy="2.7" r="2.6" fill="#fff" opacity=".9"/><path d="M2.7 0 V5.4" stroke="#888" stroke-width=".6"/></svg>
<div class="t" style="left:802.00px;width:400px;text-align:center;top:419.29px;font-size:7px;line-height:7px;color:#222;font-weight:bold;transform:scaleX(0.8);transform-origin:50% 0;">12 Months Spend 213,216.11</div>
<svg class="a" style="left:820px;top:380px;" width="300" height="230" viewBox="0 0 300 230"><path d="M181.90 129.50 L172.78 64.64 A65.5 65.5 0 0 1 247.40 129.50 Z" fill="#5865f0"/><path d="M181.90 129.50 L247.40 129.50 A65.5 65.5 0 0 1 202.68 191.62 Z" fill="#45cc89"/><path d="M181.90 129.50 L202.68 191.62 A65.5 65.5 0 0 1 116.99 138.28 Z" fill="#ef88b8"/><path d="M181.90 129.50 L116.99 138.28 A65.5 65.5 0 0 1 117.58 117.11 Z" fill="#33c8fa"/><path d="M181.90 129.50 L117.58 117.11 A65.5 65.5 0 0 1 125.06 96.95 Z" fill="#f96c7c"/><path d="M181.90 129.50 L125.06 96.95 A65.5 65.5 0 0 1 172.78 64.64 Z" fill="#fec45a"/><path d="M224.90 80.10 L232.00 69.60" fill="none" stroke="#666" stroke-width=".6"/><path d="M145.50 74.90 L142.30 67.00 L139.70 64.80" fill="none" stroke="#666" stroke-width=".6"/><path d="M119.90 106.50 L111.50 101.50" fill="none" stroke="#666" stroke-width=".6"/><path d="M116.80 127.00 L106.50 125.80" fill="none" stroke="#666" stroke-width=".6"/><path d="M236.00 167.20 L243.90 174.60" fill="none" stroke="#666" stroke-width=".6"/><path d="M148.20 185.70 L142.30 194.90" fill="none" stroke="#666" stroke-width=".6"/></svg>
<div class="t" style="left:1052.80px;top:448.24px;font-size:5.8px;line-height:5.8px;color:#333;transform:scaleX(0.8);transform-origin:0 0;">Airfare</div>
<div class="t" style="right:322.10px;top:442.64px;font-size:5.8px;line-height:5.8px;color:#333;transform:scaleX(0.76);transform-origin:100% 0;">Meals - Customers-Dinner</div>
<div class="t" style="right:349.80px;top:479.34px;font-size:5.8px;line-height:5.8px;color:#333;transform:scaleX(0.76);transform-origin:100% 0;">Meals -Self while Traveling</div>
<div class="t" style="right:354.60px;top:503.64px;font-size:5.8px;line-height:5.8px;color:#333;transform:scaleX(0.8);transform-origin:100% 0;">Rental Rate</div>
<div class="t" style="left:1064.70px;top:552.44px;font-size:5.8px;line-height:5.8px;color:#333;transform:scaleX(0.8);transform-origin:0 0;">Other</div>
<div class="t" style="right:319.50px;top:573.54px;font-size:5.8px;line-height:5.8px;color:#333;transform:scaleX(0.8);transform-origin:100% 0;">Room Rent</div>
<svg class="a" style="left:881.9px;top:593.5px;" width="5" height="5" viewBox="0 0 5 5"><path d="M2.5 2.5 L2.5 0 A2.5 2.5 0 1 1 0.3 1.3 Z" fill="#5865f0"/></svg>
<div class="t" style="left:888.50px;top:593.84px;font-size:5.8px;line-height:5.8px;color:#7a7a7a;transform:scaleX(0.76);transform-origin:0 0;">Airfare</div>
<svg class="a" style="left:907px;top:593.5px;" width="5" height="5" viewBox="0 0 5 5"><path d="M2.5 2.5 L2.5 0 A2.5 2.5 0 1 1 0.3 1.3 Z" fill="#fec45a"/></svg>
<div class="t" style="left:912.20px;top:593.84px;font-size:5.8px;line-height:5.8px;color:#7a7a7a;transform:scaleX(0.76);transform-origin:0 0;">Meals - Customers-Dinner</div>
<svg class="a" style="left:970.3px;top:593.5px;" width="5" height="5" viewBox="0 0 5 5"><path d="M2.5 2.5 L2.5 0 A2.5 2.5 0 1 1 0.3 1.3 Z" fill="#f96c7c"/></svg>
<div class="t" style="left:976.90px;top:593.84px;font-size:5.8px;line-height:5.8px;color:#7a7a7a;transform:scaleX(0.76);transform-origin:0 0;">Meals -Self while Traveling</div>
<svg class="a" style="left:1034.9px;top:593.5px;" width="5" height="5" viewBox="0 0 5 5"><path d="M2.5 2.5 L2.5 0 A2.5 2.5 0 1 1 0.3 1.3 Z" fill="#33c8fa"/></svg>
<div class="t" style="left:1041.50px;top:593.84px;font-size:5.8px;line-height:5.8px;color:#7a7a7a;transform:scaleX(0.76);transform-origin:0 0;">Rental Rate</div>
<svg class="a" style="left:1070.5px;top:593.5px;" width="5" height="5" viewBox="0 0 5 5"><path d="M2.5 2.5 L2.5 0 A2.5 2.5 0 1 1 0.3 1.3 Z" fill="#ef88b8"/></svg>
<div class="t" style="left:1077.10px;top:593.84px;font-size:5.8px;line-height:5.8px;color:#7a7a7a;transform:scaleX(0.76);transform-origin:0 0;">Room Rent</div>
<svg class="a" style="left:1105.7px;top:593.5px;" width="5" height="5" viewBox="0 0 5 5"><path d="M2.5 2.5 L2.5 0 A2.5 2.5 0 1 1 0.3 1.3 Z" fill="#45cc89"/></svg>
<div class="t" style="left:1111.50px;top:593.84px;font-size:5.8px;line-height:5.8px;color:#7a7a7a;transform:scaleX(0.76);transform-origin:0 0;">Other</div>
</body></html>
